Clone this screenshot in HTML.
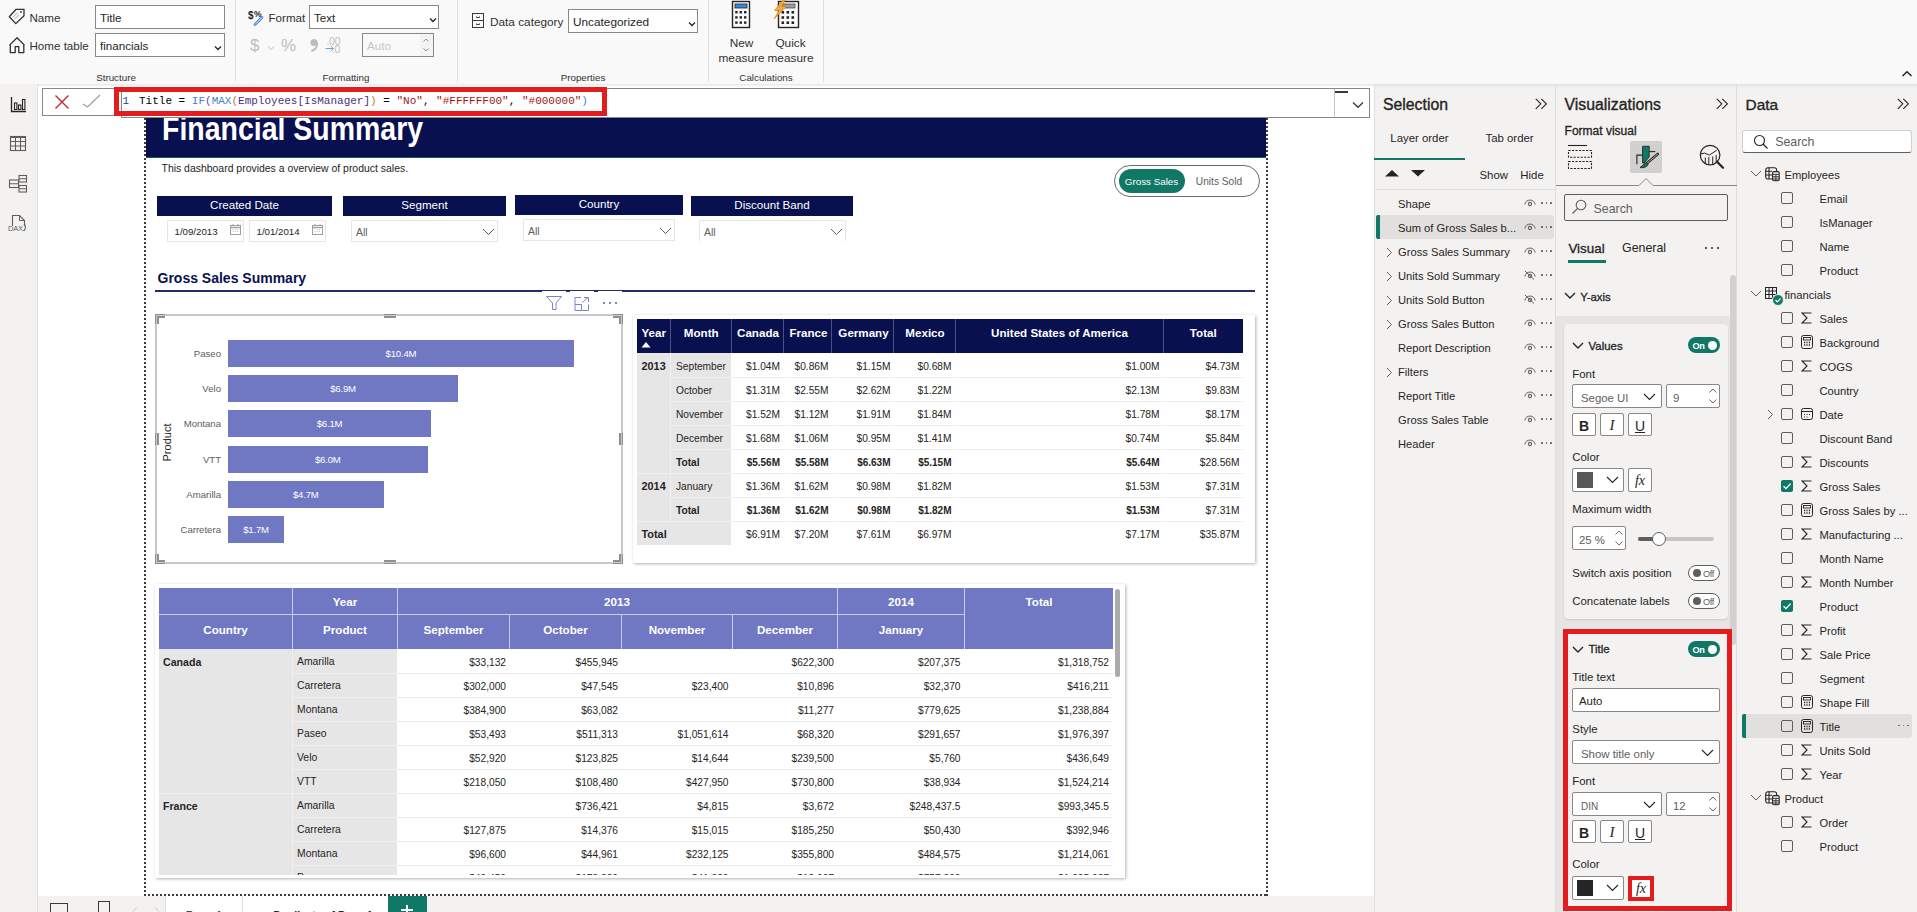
<!DOCTYPE html>
<html><head><meta charset="utf-8">
<style>
*{margin:0;padding:0;box-sizing:border-box}
html,body{width:1917px;height:912px;overflow:hidden;background:#fff;font-family:"Liberation Sans",sans-serif;color:#252423;position:relative}
.a{position:absolute}
.t{position:absolute;white-space:nowrap;line-height:1}
</style></head><body>
<div class="a" style="left:0px;top:0px;width:1917px;height:84px;background:#f9f9f9;"></div>
<div class="a" style="left:0px;top:84px;width:1917px;height:828px;background:#fff;"></div>
<div class="a" style="left:235px;top:0px;width:1px;height:82px;background:#e1dfdd;"></div>
<div class="a" style="left:457px;top:0px;width:1px;height:82px;background:#e1dfdd;"></div>
<div class="a" style="left:708px;top:0px;width:1px;height:82px;background:#e1dfdd;"></div>
<div class="a" style="left:823px;top:0px;width:1px;height:82px;background:#e1dfdd;"></div>
<svg class="a" style="left:8px;top:8px;" width="18" height="18" viewBox="0 0 18 18" fill="none"><path d="M1.3 8.8 L8.1 1.3 H16 V7.8 L7.8 15.6 Z" stroke="#323130" stroke-width="1.3" stroke-linejoin="round"/><circle cx="13" cy="3.9" r="0.9" fill="#323130"/><path d="M4.8 9.3 L9.8 4.6 M6.6 11 L11.2 6.6" stroke="#9a9896" stroke-width="0.8"/></svg>
<div class="t" style="top:12.14px;font-size:11.6px;color:#323130;left:29.5px;">Name</div>
<div class="a" style="left:95px;top:5px;width:130px;height:24px;background:#fff;border:1px solid #8a8886;"></div>
<div class="t" style="top:12.14px;font-size:11.6px;color:#252423;left:100px;">Title</div>
<svg class="a" style="left:8px;top:36px;" width="18" height="18" viewBox="0 0 18 18" fill="none"><path d="M1.4 9.4 L9 1.7 L16.6 9.4 M2.3 8.6 V16.6 H7.2 V10.6 H10.8 V16.6 H15.8 V8.6" stroke="#323130" stroke-width="1.3" stroke-linejoin="round"/></svg>
<div class="t" style="top:40.14px;font-size:11.6px;color:#323130;left:29.5px;">Home table</div>
<div class="a" style="left:95px;top:33px;width:130px;height:24px;background:#fff;border:1px solid #8a8886;"></div>
<div class="t" style="top:40.14px;font-size:11.6px;color:#252423;left:100px;">financials</div>
<svg class="a" style="left:214px;top:45px;" width="8" height="6" viewBox="0 0 8 6" fill="none"><path d="M1 1.5 L4 4.5 L7 1.5" stroke="#252423" stroke-width="1.3"/></svg>
<div class="t" style="top:72.67px;font-size:9.8px;color:#323130;left:-284px;width:800px;text-align:center;">Structure</div>
<div class="t" style="top:10.50px;font-size:10px;color:#252423;font-weight:700;left:248px;">$</div>
<div class="t" style="top:10.28px;font-size:8.5px;color:#252423;font-weight:700;left:254px;">%</div>
<svg class="a" style="left:253px;top:14px;" width="12" height="12" viewBox="0 0 12 12" fill="none"><path d="M2 10.5 L9 3.5" stroke="#2f7cd6" stroke-width="2.6" stroke-linecap="round"/><path d="M2 10.5 L9 3.5" stroke="#fff" stroke-width="1" stroke-linecap="round"/></svg>
<div class="t" style="top:12.14px;font-size:11.6px;color:#323130;left:268.5px;">Format</div>
<div class="a" style="left:309px;top:5px;width:130px;height:24px;background:#fff;border:1px solid #8a8886;"></div>
<div class="t" style="top:12.14px;font-size:11.6px;color:#252423;left:314px;">Text</div>
<svg class="a" style="left:429px;top:17px;" width="8" height="6" viewBox="0 0 8 6" fill="none"><path d="M1 1.5 L4 4.5 L7 1.5" stroke="#252423" stroke-width="1.3"/></svg>
<div class="t" style="top:36.55px;font-size:17px;color:#bdbdbd;left:250px;">$</div>
<svg class="a" style="left:267px;top:45px;" width="8" height="6" viewBox="0 0 8 6" fill="none"><path d="M1 1.5 L4 4.5 L7 1.5" stroke="#bdbdbd" stroke-width="1"/></svg>
<div class="t" style="top:37.05px;font-size:17px;color:#bdbdbd;left:281px;">%</div>
<svg class="a" style="left:309px;top:38px;" width="10" height="14" viewBox="0 0 10 14" fill="none"><circle cx="5" cy="4.5" r="3.6" fill="#bdbdbd"/><path d="M8.2 5 C8.2 9 6 12 2.5 13" stroke="#bdbdbd" stroke-width="2"/></svg>
<div class="t" style="top:36.08px;font-size:10.5px;color:#bdbdbd;left:326.5px;letter-spacing:-0.3px;">.00</div>
<div class="t" style="top:43.58px;font-size:10.5px;color:#bdbdbd;left:332px;letter-spacing:-0.3px;">.0</div>
<svg class="a" style="left:325px;top:45px;" width="10" height="7" viewBox="0 0 10 7" fill="none"><path d="M0.5 3.5 H8.5 M5.8 1 L8.5 3.5 L5.8 6" stroke="#5fa8de" stroke-width="1"/></svg>
<div class="a" style="left:362px;top:33px;width:72px;height:24px;background:#f9f9f9;border:1px solid #8a8886;"></div>
<div class="t" style="top:40.14px;font-size:11.6px;color:#c8c6c4;left:367px;">Auto</div>
<div class="a" style="left:420px;top:34px;width:13px;height:22px;background:#f3f3f3;"></div>
<svg class="a" style="left:421px;top:36px;" width="10" height="18" viewBox="0 0 10 18" fill="none"><path d="M2.5 5.5 L5 3 L7.5 5.5 M2.5 12.5 L5 15 L7.5 12.5" stroke="#8a8886" stroke-width="0.9"/></svg>
<div class="t" style="top:72.67px;font-size:9.8px;color:#323130;left:-54px;width:800px;text-align:center;">Formatting</div>
<svg class="a" style="left:471px;top:12px;" width="15" height="17" viewBox="0 0 15 17" fill="none"><rect x="1.5" y="1.5" width="11" height="14" stroke="#3b3a39" stroke-width="1"/><path d="M1.5 8.5 H12.5 M5.5 4.5 V5.5 H8.5 V4.5 M5.5 11.5 V12.5 H8.5 V11.5" stroke="#3b3a39" stroke-width="1"/></svg>
<div class="t" style="top:16.97px;font-size:11.8px;color:#323130;left:490px;">Data category</div>
<div class="a" style="left:568px;top:9px;width:130px;height:24px;background:#fff;border:1px solid #8a8886;"></div>
<div class="t" style="top:16.97px;font-size:11.8px;color:#252423;left:573px;">Uncategorized</div>
<svg class="a" style="left:688px;top:21px;" width="8" height="6" viewBox="0 0 8 6" fill="none"><path d="M1 1.5 L4 4.5 L7 1.5" stroke="#252423" stroke-width="1.3"/></svg>
<div class="t" style="top:72.67px;font-size:9.8px;color:#323130;left:183px;width:800px;text-align:center;">Properties</div>
<svg class="a" style="left:731px;top:0px;" width="20" height="29" viewBox="0 0 20 29" fill="none"><rect x="1.5" y="1.5" width="17" height="26" stroke="#252423" stroke-width="1.4"/><rect x="4" y="4" width="12" height="4" fill="#3a86d8" stroke="#252423" stroke-width="0.8"/><rect x="4.2" y="11.0" width="2.4" height="2.4" fill="#252423"/><rect x="8.6" y="11.0" width="2.4" height="2.4" fill="#252423"/><rect x="13.0" y="11.0" width="2.4" height="2.4" fill="#252423"/><rect x="4.2" y="16.2" width="2.4" height="2.4" fill="#252423"/><rect x="8.6" y="16.2" width="2.4" height="2.4" fill="#252423"/><rect x="13.0" y="16.2" width="2.4" height="2.4" fill="#252423"/><rect x="4.2" y="21.4" width="2.4" height="2.4" fill="#252423"/><rect x="8.6" y="21.4" width="2.4" height="2.4" fill="#252423"/><rect x="13.0" y="21.4" width="2.4" height="2.4" fill="#252423"/></svg>
<svg class="a" style="left:773px;top:0px;" width="28" height="29" viewBox="0 0 28 29" fill="none"><rect x="5.5" y="1.5" width="20" height="26" stroke="#252423" stroke-width="1.4"/><rect x="9" y="4" width="13" height="4" fill="#a0a0a0" stroke="#252423" stroke-width="0.6"/><rect x="8.5" y="11.0" width="2.6" height="2.6" fill="#252423"/><rect x="13.5" y="11.0" width="2.6" height="2.6" fill="#252423"/><rect x="18.5" y="11.0" width="2.6" height="2.6" fill="#252423"/><rect x="8.5" y="16.2" width="2.6" height="2.6" fill="#252423"/><rect x="13.5" y="16.2" width="2.6" height="2.6" fill="#252423"/><rect x="18.5" y="16.2" width="2.6" height="2.6" fill="#252423"/><rect x="8.5" y="21.4" width="2.6" height="2.6" fill="#252423"/><rect x="13.5" y="21.4" width="2.6" height="2.6" fill="#252423"/><rect x="18.5" y="21.4" width="2.6" height="2.6" fill="#252423"/><path d="M10 0 L1.5 10.5 H6 L1 19 L13.5 6.5 H8.5 L12.5 0 Z" fill="#f2a93b" stroke="#c77d12" stroke-width="0.6"/></svg>
<div class="t" style="top:37.97px;font-size:11.8px;color:#323130;left:341.5px;width:800px;text-align:center;">New</div>
<div class="t" style="top:52.97px;font-size:11.8px;color:#323130;left:341.5px;width:800px;text-align:center;">measure</div>
<div class="t" style="top:37.97px;font-size:11.8px;color:#323130;left:390.5px;width:800px;text-align:center;">Quick</div>
<div class="t" style="top:52.97px;font-size:11.8px;color:#323130;left:390.5px;width:800px;text-align:center;">measure</div>
<div class="t" style="top:72.67px;font-size:9.8px;color:#323130;left:366px;width:800px;text-align:center;">Calculations</div>
<svg class="a" style="left:1901px;top:70px;" width="12" height="8" viewBox="0 0 12 8" fill="none"><path d="M1.5 6 L6 1.8 L10.5 6" stroke="#252423" stroke-width="1.5"/></svg>
<div class="a" style="left:0px;top:84px;width:1374px;height:3px;background:linear-gradient(#e6e6e6,#fff);"></div>
<div class="a" style="left:0px;top:84px;width:38px;height:828px;background:#f3f2f1;border-right:1px solid #e1dfdd;"></div>
<svg class="a" style="left:10px;top:96px;" width="17" height="17" viewBox="0 0 17 17" fill="none"><path d="M1.5 1 V15.5 H16" stroke="#252423" stroke-width="1.3"/><rect x="4.5" y="7" width="2.4" height="6.5" stroke="#252423" stroke-width="1.1"/><rect x="8.5" y="9" width="2.4" height="4.5" stroke="#252423" stroke-width="1.1"/><rect x="12.5" y="3.5" width="2.4" height="10" stroke="#252423" stroke-width="1.1"/></svg>
<svg class="a" style="left:9px;top:135px;" width="18" height="17" viewBox="0 0 18 17" fill="none"><rect x="1.5" y="1.5" width="15" height="14" stroke="#605e5c" stroke-width="1.1"/><path d="M1.5 2 H16.5" stroke="#605e5c" stroke-width="2"/><path d="M1.5 6.5 H16.5 M1.5 11 H16.5 M6.5 1.5 V15.5 M11.5 1.5 V15.5" stroke="#605e5c" stroke-width="1.1"/></svg>
<svg class="a" style="left:8px;top:174px;" width="20" height="20" viewBox="0 0 20 20" fill="none"><rect x="1.5" y="6" width="9" height="7.5" stroke="#605e5c" stroke-width="1.1"/><rect x="11" y="1.5" width="7.5" height="6.5" stroke="#605e5c" stroke-width="1.1"/><rect x="11" y="11.5" width="7.5" height="6.5" stroke="#605e5c" stroke-width="1.1"/><path d="M1.5 9.8 H10.5 M11 4.8 H18.5 M11 14.8 H18.5" stroke="#605e5c" stroke-width="1.1"/></svg>
<svg class="a" style="left:8px;top:214px;" width="20" height="20" viewBox="0 0 20 20" fill="none"><path d="M4.5 12 V1.5 H11.5 L16.5 6.5 V12" stroke="#605e5c" stroke-width="1.1"/><path d="M11.5 1.5 V6.5 H16.5" stroke="#605e5c" stroke-width="1"/><path d="M16 10 C18 12 18 15 15.5 17" stroke="#605e5c" stroke-width="1.1"/></svg>
<div class="t" style="left:8px;top:225px;font-size:7.5px;color:#605e5c;letter-spacing:-0.2px">DAX</div>
<div class="a" style="left:42px;top:88px;width:1328px;height:28px;background:#fff;border:1px solid #8a8886;"></div>
<div class="a" style="left:121px;top:92px;width:1249px;height:26px;background:#fff;border:1px solid #8a8886;border-top:none;"></div>
<div class="a" style="left:1334px;top:89px;width:1px;height:28px;background:#c8c6c4;"></div>
<div class="a" style="left:1335px;top:91px;width:13px;height:2px;background:#3b3a39;"></div>
<svg class="a" style="left:1352px;top:101px;" width="12" height="8" viewBox="0 0 12 8" fill="none"><path d="M1 1.5 L6 6.3 L11 1.5" stroke="#3b3a39" stroke-width="1.3"/></svg>
<svg class="a" style="left:54px;top:94px;" width="16" height="16" viewBox="0 0 16 16" fill="none"><path d="M1.5 1.5 L14.5 14.5 M14.5 1.5 L1.5 14.5" stroke="#c4262e" stroke-width="1.4"/></svg>
<svg class="a" style="left:82px;top:94px;" width="20" height="14" viewBox="0 0 20 14" fill="none"><path d="M1 10 L5.5 13 L18 1" stroke="#a19f9d" stroke-width="1.2"/></svg>
<div class="a" style="left:114px;top:87px;width:493px;height:29px;border:5px solid #e31d1d;"></div>
<div class="t" style="top:95.72px;font-size:10.9px;color:#1f3f8f;font-family:'Liberation Mono',monospace;left:122.5px;">1</div>
<div class="t" style="top:95.64px;font-size:11px;color:#000;font-family:'Liberation Mono',monospace;left:139px;"><span style="color:#000">Title = </span><span style="color:#3f7fd6">IF</span><span style="color:#7a3fb0">(</span><span style="color:#3f7fd6">MAX</span><span style="color:#c07a1a">(</span><span style="color:#4b2d7f">Employees[IsManager]</span><span style="color:#c07a1a">)</span><span style="color:#000"> = </span><span style="color:#a31515">"No"</span><span style="color:#000">, </span><span style="color:#a31515">"#FFFFFF00"</span><span style="color:#000">, </span><span style="color:#a31515">"#000000"</span><span style="color:#3f7fd6">)</span></div>
<div class="a" style="left:144px;top:118px;width:2px;height:778px;background:repeating-linear-gradient(to bottom,#3b3b3b 0 2px,transparent 2px 4px);"></div>
<div class="a" style="left:1266px;top:118px;width:2px;height:778px;background:repeating-linear-gradient(to bottom,#3b3b3b 0 2px,transparent 2px 4px);"></div>
<div class="a" style="left:144px;top:894px;width:1124px;height:2px;background:repeating-linear-gradient(to right,#3b3b3b 0 2px,transparent 2px 4px);"></div>
<div class="a" style="left:146px;top:118px;width:1120px;height:40px;background:#09104f;border-bottom:1px solid #1d5a5a;"></div>
<div class="a" style="left:146px;top:118px;width:1120px;height:40px;overflow:hidden"><div class="t" style="left:16px;top:-5px;font-size:32.5px;font-weight:bold;color:#fff;transform:scaleX(0.876);transform-origin:left">Financial Summary</div></div>
<div class="t" style="top:164.42px;font-size:10.45px;color:#252423;left:161.5px;">This dashboard provides a overview of product sales.</div>
<div class="a" style="left:1114px;top:165px;width:146px;height:32px;background:#fff;border:1px solid #6b6b6b;border-radius:16px;"></div>
<div class="a" style="left:1119px;top:169px;width:66px;height:24px;background:#117865;border-radius:12px;"></div>
<div class="t" style="top:176.97px;font-size:9.8px;color:#fff;left:751.5px;width:800px;text-align:center;">Gross Sales</div>
<div class="t" style="top:176.63px;font-size:10.2px;color:#605e5c;left:819px;width:800px;text-align:center;">Units Sold</div>
<div class="a" style="left:157px;top:196px;width:175px;height:20px;background:#09104f;"></div>
<div class="t" style="top:199.34px;font-size:11.6px;color:#fff;left:-155.5px;width:800px;text-align:center;">Created Date</div>
<div class="a" style="left:343px;top:196px;width:163px;height:20px;background:#09104f;"></div>
<div class="t" style="top:199.34px;font-size:11.6px;color:#fff;left:24.5px;width:800px;text-align:center;">Segment</div>
<div class="a" style="left:515px;top:195px;width:168px;height:20px;background:#09104f;"></div>
<div class="t" style="top:198.34px;font-size:11.6px;color:#fff;left:199.0px;width:800px;text-align:center;">Country</div>
<div class="a" style="left:691px;top:196px;width:162px;height:20px;background:#09104f;"></div>
<div class="t" style="top:199.34px;font-size:11.6px;color:#fff;left:372.0px;width:800px;text-align:center;">Discount Band</div>
<div class="a" style="left:167px;top:220px;width:77px;height:22px;background:#fff;border:1px solid #e6e6e6;"></div>
<div class="t" style="top:227.25px;font-size:9.7px;color:#252423;left:174.5px;">1/09/2013</div>
<svg class="a" style="left:230px;top:224px;" width="12" height="12" viewBox="0 0 12 12" fill="none"><rect x="0.5" y="1.5" width="10" height="9" stroke="#a19f9d" stroke-width="1"/><path d="M0.5 3.5 H10.5" stroke="#a19f9d" stroke-width="1.4"/><path d="M2.5 5.5 h1 M4.8 5.5 h1 M7 5.5 h1 M2.5 7.5 h1 M4.8 7.5 h1 M7 7.5 h1" stroke="#c8c6c4" stroke-width="1"/><path d="M3 0 V2 M8 0 V2" stroke="#a19f9d" stroke-width="1"/></svg>
<div class="a" style="left:249px;top:220px;width:77px;height:22px;background:#fff;border:1px solid #e6e6e6;"></div>
<div class="t" style="top:227.25px;font-size:9.7px;color:#252423;left:256.5px;">1/01/2014</div>
<svg class="a" style="left:312px;top:224px;" width="12" height="12" viewBox="0 0 12 12" fill="none"><rect x="0.5" y="1.5" width="10" height="9" stroke="#a19f9d" stroke-width="1"/><path d="M0.5 3.5 H10.5" stroke="#a19f9d" stroke-width="1.4"/><path d="M2.5 5.5 h1 M4.8 5.5 h1 M7 5.5 h1 M2.5 7.5 h1 M4.8 7.5 h1 M7 7.5 h1" stroke="#c8c6c4" stroke-width="1"/><path d="M3 0 V2 M8 0 V2" stroke="#a19f9d" stroke-width="1"/></svg>
<div class="a" style="left:351px;top:220px;width:147px;height:22px;background:#fff;border:1px solid #e6e6e6;"></div>
<div class="t" style="top:227.07px;font-size:10.5px;color:#605e5c;left:356px;">All</div>
<svg class="a" style="left:482px;top:228px;" width="13" height="8" viewBox="0 0 13 8" fill="none"><path d="M1 1 L6.5 6.5 L12 1" stroke="#605e5c" stroke-width="1"/></svg>
<div class="a" style="left:523px;top:219px;width:152px;height:22px;background:#fff;border:1px solid #e6e6e6;"></div>
<div class="t" style="top:226.07px;font-size:10.5px;color:#605e5c;left:528px;">All</div>
<svg class="a" style="left:659px;top:227px;" width="13" height="8" viewBox="0 0 13 8" fill="none"><path d="M1 1 L6.5 6.5 L12 1" stroke="#605e5c" stroke-width="1"/></svg>
<div class="a" style="left:699px;top:220px;width:147px;height:21px;background:#fff;border:1px solid #e6e6e6;border-bottom:none;"></div>
<div class="t" style="top:227.07px;font-size:10.5px;color:#605e5c;left:704px;">All</div>
<svg class="a" style="left:830px;top:228px;" width="13" height="8" viewBox="0 0 13 8" fill="none"><path d="M1 1 L6.5 6.5 L12 1" stroke="#605e5c" stroke-width="1"/></svg>
<div class="t" style="top:270.80px;font-size:14.0px;color:#09104f;font-weight:700;left:157.5px;">Gross Sales Summary</div>
<div class="a" style="left:155px;top:290px;width:1100px;height:2px;background:#252b66;"></div>
<div class="a" style="left:542px;top:291px;width:24px;height:1px;background:#fff;"></div>
<div class="a" style="left:570px;top:291px;width:24px;height:1px;background:#fff;"></div>
<div class="a" style="left:598px;top:291px;width:24px;height:1px;background:#fff;"></div>
<svg class="a" style="left:545px;top:295px;" width="18" height="16" viewBox="0 0 18 16" fill="none"><path d="M1.5 1.5 H16.5 L11 8 V14.5 H7.5 V8 Z" stroke="#7c84c9" stroke-width="1" stroke-linejoin="miter"/></svg>
<svg class="a" style="left:574px;top:297px;" width="16" height="14" viewBox="0 0 16 14" fill="none"><path d="M7 0.5 H1 V13.5 H14.5 V7.5 M1 7.5 H7.5 V13.5" stroke="#7c84c9" stroke-width="1"/><path d="M8.5 5.5 L14 0.5 M10 0.5 H14.5 V5" stroke="#7c84c9" stroke-width="1"/></svg>
<div class="a" style="left:603px;top:302px;width:2px;height:2px;background:#7c84c9;"></div>
<div class="a" style="left:609px;top:302px;width:2px;height:2px;background:#7c84c9;"></div>
<div class="a" style="left:615px;top:302px;width:2px;height:2px;background:#7c84c9;"></div>
<div class="a" style="left:155px;top:314px;width:468px;height:250px;background:#fff;border:2px solid #c8c8c8;"></div>
<div class="a" style="left:155px;top:314px;width:10px;height:1px;background:#8f8f8f;"></div>
<div class="a" style="left:155px;top:314px;width:1px;height:10px;background:#8f8f8f;"></div>
<div class="a" style="left:157px;top:316px;width:8px;height:2px;background:#8f8f8f;"></div>
<div class="a" style="left:157px;top:316px;width:2px;height:8px;background:#8f8f8f;"></div>
<div class="a" style="left:613px;top:314px;width:10px;height:1px;background:#8f8f8f;"></div>
<div class="a" style="left:622px;top:314px;width:1px;height:10px;background:#8f8f8f;"></div>
<div class="a" style="left:613px;top:316px;width:8px;height:2px;background:#8f8f8f;"></div>
<div class="a" style="left:619px;top:316px;width:2px;height:8px;background:#8f8f8f;"></div>
<div class="a" style="left:155px;top:563px;width:10px;height:1px;background:#8f8f8f;"></div>
<div class="a" style="left:155px;top:554px;width:1px;height:10px;background:#8f8f8f;"></div>
<div class="a" style="left:157px;top:560px;width:8px;height:2px;background:#8f8f8f;"></div>
<div class="a" style="left:157px;top:554px;width:2px;height:8px;background:#8f8f8f;"></div>
<div class="a" style="left:613px;top:563px;width:10px;height:1px;background:#8f8f8f;"></div>
<div class="a" style="left:622px;top:554px;width:1px;height:10px;background:#8f8f8f;"></div>
<div class="a" style="left:613px;top:560px;width:8px;height:2px;background:#8f8f8f;"></div>
<div class="a" style="left:619px;top:554px;width:2px;height:8px;background:#8f8f8f;"></div>
<div class="a" style="left:384px;top:314px;width:12px;height:1px;background:#8f8f8f;"></div>
<div class="a" style="left:384px;top:316px;width:12px;height:2px;background:#8f8f8f;"></div>
<div class="a" style="left:384px;top:563px;width:12px;height:1px;background:#8f8f8f;"></div>
<div class="a" style="left:384px;top:560px;width:12px;height:2px;background:#8f8f8f;"></div>
<div class="a" style="left:155px;top:433px;width:1px;height:12px;background:#8f8f8f;"></div>
<div class="a" style="left:157px;top:433px;width:2px;height:12px;background:#8f8f8f;"></div>
<div class="a" style="left:622px;top:433px;width:1px;height:12px;background:#8f8f8f;"></div>
<div class="a" style="left:619px;top:433px;width:2px;height:12px;background:#8f8f8f;"></div>
<div class="a" style="left:228px;top:340px;width:346px;height:27px;background:#7078c4;"></div>
<div class="t" style="top:348.54px;font-size:9.6px;color:#605e5c;right:1696px;">Paseo</div>
<div class="t" style="top:348.54px;font-size:9.6px;color:#fff;left:1.0px;width:800px;text-align:center;letter-spacing:-0.2px;">$10.4M</div>
<div class="a" style="left:228px;top:375px;width:230px;height:27px;background:#7078c4;"></div>
<div class="t" style="top:383.54px;font-size:9.6px;color:#605e5c;right:1696px;">Velo</div>
<div class="t" style="top:383.54px;font-size:9.6px;color:#fff;left:-57.0px;width:800px;text-align:center;letter-spacing:-0.2px;">$6.9M</div>
<div class="a" style="left:228px;top:410px;width:203px;height:27px;background:#7078c4;"></div>
<div class="t" style="top:418.54px;font-size:9.6px;color:#605e5c;right:1696px;">Montana</div>
<div class="t" style="top:418.54px;font-size:9.6px;color:#fff;left:-70.5px;width:800px;text-align:center;letter-spacing:-0.2px;">$6.1M</div>
<div class="a" style="left:228px;top:446px;width:200px;height:27px;background:#7078c4;"></div>
<div class="t" style="top:454.54px;font-size:9.6px;color:#605e5c;right:1696px;">VTT</div>
<div class="t" style="top:454.54px;font-size:9.6px;color:#fff;left:-72.25px;width:800px;text-align:center;letter-spacing:-0.2px;">$6.0M</div>
<div class="a" style="left:228px;top:481px;width:156px;height:27px;background:#7078c4;"></div>
<div class="t" style="top:489.54px;font-size:9.6px;color:#605e5c;right:1696px;">Amarilla</div>
<div class="t" style="top:489.54px;font-size:9.6px;color:#fff;left:-94.25px;width:800px;text-align:center;letter-spacing:-0.2px;">$4.7M</div>
<div class="a" style="left:228px;top:516px;width:56px;height:27px;background:#7078c4;"></div>
<div class="t" style="top:524.54px;font-size:9.6px;color:#605e5c;right:1696px;">Carretera</div>
<div class="t" style="top:524.54px;font-size:9.6px;color:#fff;left:-144.0px;width:800px;text-align:center;letter-spacing:-0.2px;">$1.7M</div>
<div class="t" style="left:148px;top:437px;font-size:11px;color:#252423;transform:rotate(-90deg);transform-origin:center;width:38px;text-align:center">Product</div>
<div class="a" style="left:633px;top:315px;width:622px;height:248px;background:#fff;box-shadow:1px 1px 3px rgba(0,0,0,.3);"></div>
<div class="a" style="left:637px;top:319px;width:606px;height:34px;background:#09104f;"></div>
<div class="t" style="top:326.84px;font-size:11.6px;color:#fff;font-weight:700;left:641.5px;">Year</div>
<div class="a" style="left:670px;top:319px;width:1px;height:34px;background:#4c5280;"></div>
<div class="t" style="top:326.84px;font-size:11.6px;color:#fff;font-weight:700;left:301.25px;width:800px;text-align:center;">Month</div>
<div class="a" style="left:731px;top:319px;width:1px;height:34px;background:#4c5280;"></div>
<div class="t" style="top:326.84px;font-size:11.6px;color:#fff;font-weight:700;left:358.0px;width:800px;text-align:center;">Canada</div>
<div class="a" style="left:783px;top:319px;width:1px;height:34px;background:#4c5280;"></div>
<div class="t" style="top:326.84px;font-size:11.6px;color:#fff;font-weight:700;left:408.5px;width:800px;text-align:center;">France</div>
<div class="a" style="left:831px;top:319px;width:1px;height:34px;background:#4c5280;"></div>
<div class="t" style="top:326.84px;font-size:11.6px;color:#fff;font-weight:700;left:463.5px;width:800px;text-align:center;">Germany</div>
<div class="a" style="left:893px;top:319px;width:1px;height:34px;background:#4c5280;"></div>
<div class="t" style="top:326.84px;font-size:11.6px;color:#fff;font-weight:700;left:525.0px;width:800px;text-align:center;">Mexico</div>
<div class="a" style="left:955px;top:319px;width:1px;height:34px;background:#4c5280;"></div>
<div class="t" style="top:326.84px;font-size:11.6px;color:#fff;font-weight:700;left:659.5px;width:800px;text-align:center;">United States of America</div>
<div class="a" style="left:1163px;top:319px;width:1px;height:34px;background:#4c5280;"></div>
<div class="t" style="top:326.84px;font-size:11.6px;color:#fff;font-weight:700;left:803.25px;width:800px;text-align:center;">Total</div>
<svg class="a" style="left:641px;top:341px;" width="10" height="7" viewBox="0 0 10 7" fill="none"><path d="M0.5 6.5 L5 1 L9.5 6.5 Z" fill="#fff"/></svg>
<div class="a" style="left:637px;top:353px;width:94px;height:192px;background:#e6e6e6;"></div>
<div class="a" style="left:670px;top:353px;width:1px;height:168px;background:#f0f0f0;"></div>
<div class="t" style="top:361.13px;font-size:10.9px;color:#252423;font-weight:700;left:641.5px;">2013</div>
<div class="t" style="top:361.73px;font-size:10.2px;color:#252423;left:676px;">September</div>
<div class="t" style="top:361.73px;font-size:10.2px;color:#252423;right:1137px;">$1.04M</div>
<div class="t" style="top:361.73px;font-size:10.2px;color:#252423;right:1088.5px;">$0.86M</div>
<div class="t" style="top:361.73px;font-size:10.2px;color:#252423;right:1026.5px;">$1.15M</div>
<div class="t" style="top:361.73px;font-size:10.2px;color:#252423;right:965.5px;">$0.68M</div>
<div class="t" style="top:361.73px;font-size:10.2px;color:#252423;right:757.5px;">$1.00M</div>
<div class="t" style="top:361.73px;font-size:10.2px;color:#252423;right:677.5px;">$4.73M</div>
<div class="a" style="left:731px;top:377px;width:512px;height:1px;background:#ececec;"></div>
<div class="a" style="left:671px;top:377px;width:60px;height:1px;background:#f0f0f0;"></div>
<div class="t" style="top:385.73px;font-size:10.2px;color:#252423;left:676px;">October</div>
<div class="t" style="top:385.73px;font-size:10.2px;color:#252423;right:1137px;">$1.31M</div>
<div class="t" style="top:385.73px;font-size:10.2px;color:#252423;right:1088.5px;">$2.55M</div>
<div class="t" style="top:385.73px;font-size:10.2px;color:#252423;right:1026.5px;">$2.62M</div>
<div class="t" style="top:385.73px;font-size:10.2px;color:#252423;right:965.5px;">$1.22M</div>
<div class="t" style="top:385.73px;font-size:10.2px;color:#252423;right:757.5px;">$2.13M</div>
<div class="t" style="top:385.73px;font-size:10.2px;color:#252423;right:677.5px;">$9.83M</div>
<div class="a" style="left:731px;top:401px;width:512px;height:1px;background:#ececec;"></div>
<div class="a" style="left:671px;top:401px;width:60px;height:1px;background:#f0f0f0;"></div>
<div class="t" style="top:409.73px;font-size:10.2px;color:#252423;left:676px;">November</div>
<div class="t" style="top:409.73px;font-size:10.2px;color:#252423;right:1137px;">$1.52M</div>
<div class="t" style="top:409.73px;font-size:10.2px;color:#252423;right:1088.5px;">$1.12M</div>
<div class="t" style="top:409.73px;font-size:10.2px;color:#252423;right:1026.5px;">$1.91M</div>
<div class="t" style="top:409.73px;font-size:10.2px;color:#252423;right:965.5px;">$1.84M</div>
<div class="t" style="top:409.73px;font-size:10.2px;color:#252423;right:757.5px;">$1.78M</div>
<div class="t" style="top:409.73px;font-size:10.2px;color:#252423;right:677.5px;">$8.17M</div>
<div class="a" style="left:731px;top:425px;width:512px;height:1px;background:#ececec;"></div>
<div class="a" style="left:671px;top:425px;width:60px;height:1px;background:#f0f0f0;"></div>
<div class="t" style="top:433.73px;font-size:10.2px;color:#252423;left:676px;">December</div>
<div class="t" style="top:433.73px;font-size:10.2px;color:#252423;right:1137px;">$1.68M</div>
<div class="t" style="top:433.73px;font-size:10.2px;color:#252423;right:1088.5px;">$1.06M</div>
<div class="t" style="top:433.73px;font-size:10.2px;color:#252423;right:1026.5px;">$0.95M</div>
<div class="t" style="top:433.73px;font-size:10.2px;color:#252423;right:965.5px;">$1.41M</div>
<div class="t" style="top:433.73px;font-size:10.2px;color:#252423;right:757.5px;">$0.74M</div>
<div class="t" style="top:433.73px;font-size:10.2px;color:#252423;right:677.5px;">$5.84M</div>
<div class="a" style="left:731px;top:449px;width:512px;height:1px;background:#ececec;"></div>
<div class="a" style="left:671px;top:449px;width:60px;height:1px;background:#f0f0f0;"></div>
<div class="t" style="top:457.73px;font-size:10.2px;color:#252423;font-weight:700;left:676px;">Total</div>
<div class="t" style="top:457.90px;font-size:10.0px;color:#252423;font-weight:700;right:1137px;">$5.56M</div>
<div class="t" style="top:457.90px;font-size:10.0px;color:#252423;font-weight:700;right:1088.5px;">$5.58M</div>
<div class="t" style="top:457.90px;font-size:10.0px;color:#252423;font-weight:700;right:1026.5px;">$6.63M</div>
<div class="t" style="top:457.90px;font-size:10.0px;color:#252423;font-weight:700;right:965.5px;">$5.15M</div>
<div class="t" style="top:457.90px;font-size:10.0px;color:#252423;font-weight:700;right:757.5px;">$5.64M</div>
<div class="t" style="top:457.73px;font-size:10.2px;color:#252423;right:677.5px;">$28.56M</div>
<div class="a" style="left:731px;top:473px;width:512px;height:1px;background:#ececec;"></div>
<div class="a" style="left:637px;top:473px;width:94px;height:1px;background:#f0f0f0;"></div>
<div class="t" style="top:481.13px;font-size:10.9px;color:#252423;font-weight:700;left:641.5px;">2014</div>
<div class="t" style="top:481.73px;font-size:10.2px;color:#252423;left:676px;">January</div>
<div class="t" style="top:481.73px;font-size:10.2px;color:#252423;right:1137px;">$1.36M</div>
<div class="t" style="top:481.73px;font-size:10.2px;color:#252423;right:1088.5px;">$1.62M</div>
<div class="t" style="top:481.73px;font-size:10.2px;color:#252423;right:1026.5px;">$0.98M</div>
<div class="t" style="top:481.73px;font-size:10.2px;color:#252423;right:965.5px;">$1.82M</div>
<div class="t" style="top:481.73px;font-size:10.2px;color:#252423;right:757.5px;">$1.53M</div>
<div class="t" style="top:481.73px;font-size:10.2px;color:#252423;right:677.5px;">$7.31M</div>
<div class="a" style="left:731px;top:497px;width:512px;height:1px;background:#ececec;"></div>
<div class="a" style="left:671px;top:497px;width:60px;height:1px;background:#f0f0f0;"></div>
<div class="t" style="top:505.73px;font-size:10.2px;color:#252423;font-weight:700;left:676px;">Total</div>
<div class="t" style="top:505.90px;font-size:10.0px;color:#252423;font-weight:700;right:1137px;">$1.36M</div>
<div class="t" style="top:505.90px;font-size:10.0px;color:#252423;font-weight:700;right:1088.5px;">$1.62M</div>
<div class="t" style="top:505.90px;font-size:10.0px;color:#252423;font-weight:700;right:1026.5px;">$0.98M</div>
<div class="t" style="top:505.90px;font-size:10.0px;color:#252423;font-weight:700;right:965.5px;">$1.82M</div>
<div class="t" style="top:505.90px;font-size:10.0px;color:#252423;font-weight:700;right:757.5px;">$1.53M</div>
<div class="t" style="top:505.73px;font-size:10.2px;color:#252423;right:677.5px;">$7.31M</div>
<div class="a" style="left:731px;top:521px;width:512px;height:1px;background:#ececec;"></div>
<div class="a" style="left:637px;top:521px;width:94px;height:1px;background:#f0f0f0;"></div>
<div class="t" style="top:529.13px;font-size:10.9px;color:#252423;font-weight:700;left:641.5px;">Total</div>
<div class="t" style="top:529.73px;font-size:10.2px;color:#252423;right:1137px;">$6.91M</div>
<div class="t" style="top:529.73px;font-size:10.2px;color:#252423;right:1088.5px;">$7.20M</div>
<div class="t" style="top:529.73px;font-size:10.2px;color:#252423;right:1026.5px;">$7.61M</div>
<div class="t" style="top:529.73px;font-size:10.2px;color:#252423;right:965.5px;">$6.97M</div>
<div class="t" style="top:529.73px;font-size:10.2px;color:#252423;right:757.5px;">$7.17M</div>
<div class="t" style="top:529.73px;font-size:10.2px;color:#252423;right:677.5px;">$35.87M</div>
<div class="a" style="left:784px;top:353px;width:1px;height:192px;background:linear-gradient(#fff,#fff);"></div>
<div class="a" style="left:832px;top:353px;width:1px;height:192px;background:linear-gradient(#fff,#fff);"></div>
<div class="a" style="left:894px;top:353px;width:1px;height:192px;background:linear-gradient(#fff,#fff);"></div>
<div class="a" style="left:955px;top:353px;width:1px;height:192px;background:linear-gradient(#fff,#fff);"></div>
<div class="a" style="left:1163px;top:353px;width:1px;height:192px;background:linear-gradient(#fff,#fff);"></div>
<div class="a" style="left:155px;top:584px;width:970px;height:294px;background:#fff;box-shadow:1px 1px 3px rgba(0,0,0,.3);"></div>
<div class="a" style="left:155px;top:584px;width:972px;height:291px;overflow:hidden">
<div class="a" style="left:4px;top:4px;width:954px;height:61px;background:#7078c4;"></div>
<div class="a" style="left:4px;top:30px;width:806px;height:1px;background:#c8cbe8;"></div>
<div class="a" style="left:137px;top:4px;width:1px;height:61px;background:#c8cbe8;"></div>
<div class="a" style="left:242px;top:4px;width:1px;height:61px;background:#c8cbe8;"></div>
<div class="a" style="left:682px;top:4px;width:1px;height:26px;background:#c8cbe8;"></div>
<div class="a" style="left:809px;top:4px;width:1px;height:61px;background:#c8cbe8;"></div>
<div class="a" style="left:354px;top:31px;width:1px;height:34px;background:#c8cbe8;"></div>
<div class="a" style="left:466px;top:31px;width:1px;height:34px;background:#c8cbe8;"></div>
<div class="a" style="left:577px;top:31px;width:1px;height:34px;background:#c8cbe8;"></div>
<div class="a" style="left:682px;top:31px;width:1px;height:34px;background:#c8cbe8;"></div>
<div class="t" style="top:12.14px;font-size:11.6px;color:#fff;font-weight:700;left:-210px;width:800px;text-align:center;">Year</div>
<div class="t" style="top:12.14px;font-size:11.6px;color:#fff;font-weight:700;left:62px;width:800px;text-align:center;">2013</div>
<div class="t" style="top:12.14px;font-size:11.6px;color:#fff;font-weight:700;left:346px;width:800px;text-align:center;">2014</div>
<div class="t" style="top:12.14px;font-size:11.6px;color:#fff;font-weight:700;left:484px;width:800px;text-align:center;">Total</div>
<div class="t" style="top:40.14px;font-size:11.6px;color:#fff;font-weight:700;left:-329.5px;width:800px;text-align:center;">Country</div>
<div class="t" style="top:40.14px;font-size:11.6px;color:#fff;font-weight:700;left:-210px;width:800px;text-align:center;">Product</div>
<div class="t" style="top:40.14px;font-size:11.6px;color:#fff;font-weight:700;left:-101.5px;width:800px;text-align:center;">September</div>
<div class="t" style="top:40.14px;font-size:11.6px;color:#fff;font-weight:700;left:10.5px;width:800px;text-align:center;">October</div>
<div class="t" style="top:40.14px;font-size:11.6px;color:#fff;font-weight:700;left:122px;width:800px;text-align:center;">November</div>
<div class="t" style="top:40.14px;font-size:11.6px;color:#fff;font-weight:700;left:230px;width:800px;text-align:center;">December</div>
<div class="t" style="top:40.14px;font-size:11.6px;color:#fff;font-weight:700;left:346px;width:800px;text-align:center;">January</div>
<div class="a" style="left:4px;top:65px;width:238px;height:230px;background:#e6e6e6;"></div>
<div class="a" style="left:137px;top:65px;width:1px;height:230px;background:#f0f0f0;"></div>
<div class="t" style="top:73.29px;font-size:10.6px;color:#252423;font-weight:700;left:8px;">Canada</div>
<div class="t" style="top:73.46px;font-size:10.4px;color:#252423;left:142px;">Amarilla</div>
<div class="t" style="top:73.63px;font-size:10.2px;color:#252423;right:621px;">$33,132</div>
<div class="t" style="top:73.63px;font-size:10.2px;color:#252423;right:509px;">$455,945</div>
<div class="t" style="top:73.63px;font-size:10.2px;color:#252423;right:293px;">$622,300</div>
<div class="t" style="top:73.63px;font-size:10.2px;color:#252423;right:166.5px;">$207,375</div>
<div class="t" style="top:73.63px;font-size:10.2px;color:#252423;right:18px;">$1,318,752</div>
<div class="a" style="left:242px;top:89px;width:716px;height:1px;background:#ececec;"></div>
<div class="a" style="left:138px;top:89px;width:104px;height:1px;background:#f0f0f0;"></div>
<div class="t" style="top:97.46px;font-size:10.4px;color:#252423;left:142px;">Carretera</div>
<div class="t" style="top:97.63px;font-size:10.2px;color:#252423;right:621px;">$302,000</div>
<div class="t" style="top:97.63px;font-size:10.2px;color:#252423;right:509px;">$47,545</div>
<div class="t" style="top:97.63px;font-size:10.2px;color:#252423;right:398.5px;">$23,400</div>
<div class="t" style="top:97.63px;font-size:10.2px;color:#252423;right:293px;">$10,896</div>
<div class="t" style="top:97.63px;font-size:10.2px;color:#252423;right:166.5px;">$32,370</div>
<div class="t" style="top:97.63px;font-size:10.2px;color:#252423;right:18px;">$416,211</div>
<div class="a" style="left:242px;top:113px;width:716px;height:1px;background:#ececec;"></div>
<div class="a" style="left:138px;top:113px;width:104px;height:1px;background:#f0f0f0;"></div>
<div class="t" style="top:121.46px;font-size:10.4px;color:#252423;left:142px;">Montana</div>
<div class="t" style="top:121.63px;font-size:10.2px;color:#252423;right:621px;">$384,900</div>
<div class="t" style="top:121.63px;font-size:10.2px;color:#252423;right:509px;">$63,082</div>
<div class="t" style="top:121.63px;font-size:10.2px;color:#252423;right:293px;">$11,277</div>
<div class="t" style="top:121.63px;font-size:10.2px;color:#252423;right:166.5px;">$779,625</div>
<div class="t" style="top:121.63px;font-size:10.2px;color:#252423;right:18px;">$1,238,884</div>
<div class="a" style="left:242px;top:137px;width:716px;height:1px;background:#ececec;"></div>
<div class="a" style="left:138px;top:137px;width:104px;height:1px;background:#f0f0f0;"></div>
<div class="t" style="top:145.46px;font-size:10.4px;color:#252423;left:142px;">Paseo</div>
<div class="t" style="top:145.63px;font-size:10.2px;color:#252423;right:621px;">$53,493</div>
<div class="t" style="top:145.63px;font-size:10.2px;color:#252423;right:509px;">$511,313</div>
<div class="t" style="top:145.63px;font-size:10.2px;color:#252423;right:398.5px;">$1,051,614</div>
<div class="t" style="top:145.63px;font-size:10.2px;color:#252423;right:293px;">$68,320</div>
<div class="t" style="top:145.63px;font-size:10.2px;color:#252423;right:166.5px;">$291,657</div>
<div class="t" style="top:145.63px;font-size:10.2px;color:#252423;right:18px;">$1,976,397</div>
<div class="a" style="left:242px;top:161px;width:716px;height:1px;background:#ececec;"></div>
<div class="a" style="left:138px;top:161px;width:104px;height:1px;background:#f0f0f0;"></div>
<div class="t" style="top:169.46px;font-size:10.4px;color:#252423;left:142px;">Velo</div>
<div class="t" style="top:169.63px;font-size:10.2px;color:#252423;right:621px;">$52,920</div>
<div class="t" style="top:169.63px;font-size:10.2px;color:#252423;right:509px;">$123,825</div>
<div class="t" style="top:169.63px;font-size:10.2px;color:#252423;right:398.5px;">$14,644</div>
<div class="t" style="top:169.63px;font-size:10.2px;color:#252423;right:293px;">$239,500</div>
<div class="t" style="top:169.63px;font-size:10.2px;color:#252423;right:166.5px;">$5,760</div>
<div class="t" style="top:169.63px;font-size:10.2px;color:#252423;right:18px;">$436,649</div>
<div class="a" style="left:242px;top:185px;width:716px;height:1px;background:#ececec;"></div>
<div class="a" style="left:138px;top:185px;width:104px;height:1px;background:#f0f0f0;"></div>
<div class="t" style="top:193.46px;font-size:10.4px;color:#252423;left:142px;">VTT</div>
<div class="t" style="top:193.63px;font-size:10.2px;color:#252423;right:621px;">$218,050</div>
<div class="t" style="top:193.63px;font-size:10.2px;color:#252423;right:509px;">$108,480</div>
<div class="t" style="top:193.63px;font-size:10.2px;color:#252423;right:398.5px;">$427,950</div>
<div class="t" style="top:193.63px;font-size:10.2px;color:#252423;right:293px;">$730,800</div>
<div class="t" style="top:193.63px;font-size:10.2px;color:#252423;right:166.5px;">$38,934</div>
<div class="t" style="top:193.63px;font-size:10.2px;color:#252423;right:18px;">$1,524,214</div>
<div class="a" style="left:242px;top:209px;width:716px;height:1px;background:#ececec;"></div>
<div class="a" style="left:4px;top:209px;width:238px;height:1px;background:#f0f0f0;"></div>
<div class="t" style="top:217.29px;font-size:10.6px;color:#252423;font-weight:700;left:8px;">France</div>
<div class="t" style="top:217.46px;font-size:10.4px;color:#252423;left:142px;">Amarilla</div>
<div class="t" style="top:217.63px;font-size:10.2px;color:#252423;right:509px;">$736,421</div>
<div class="t" style="top:217.63px;font-size:10.2px;color:#252423;right:398.5px;">$4,815</div>
<div class="t" style="top:217.63px;font-size:10.2px;color:#252423;right:293px;">$3,672</div>
<div class="t" style="top:217.63px;font-size:10.2px;color:#252423;right:166.5px;">$248,437.5</div>
<div class="t" style="top:217.63px;font-size:10.2px;color:#252423;right:18px;">$993,345.5</div>
<div class="a" style="left:242px;top:233px;width:716px;height:1px;background:#ececec;"></div>
<div class="a" style="left:138px;top:233px;width:104px;height:1px;background:#f0f0f0;"></div>
<div class="t" style="top:241.46px;font-size:10.4px;color:#252423;left:142px;">Carretera</div>
<div class="t" style="top:241.63px;font-size:10.2px;color:#252423;right:621px;">$127,875</div>
<div class="t" style="top:241.63px;font-size:10.2px;color:#252423;right:509px;">$14,376</div>
<div class="t" style="top:241.63px;font-size:10.2px;color:#252423;right:398.5px;">$15,015</div>
<div class="t" style="top:241.63px;font-size:10.2px;color:#252423;right:293px;">$185,250</div>
<div class="t" style="top:241.63px;font-size:10.2px;color:#252423;right:166.5px;">$50,430</div>
<div class="t" style="top:241.63px;font-size:10.2px;color:#252423;right:18px;">$392,946</div>
<div class="a" style="left:242px;top:257px;width:716px;height:1px;background:#ececec;"></div>
<div class="a" style="left:138px;top:257px;width:104px;height:1px;background:#f0f0f0;"></div>
<div class="t" style="top:265.46px;font-size:10.4px;color:#252423;left:142px;">Montana</div>
<div class="t" style="top:265.63px;font-size:10.2px;color:#252423;right:621px;">$96,600</div>
<div class="t" style="top:265.63px;font-size:10.2px;color:#252423;right:509px;">$44,961</div>
<div class="t" style="top:265.63px;font-size:10.2px;color:#252423;right:398.5px;">$232,125</div>
<div class="t" style="top:265.63px;font-size:10.2px;color:#252423;right:293px;">$355,800</div>
<div class="t" style="top:265.63px;font-size:10.2px;color:#252423;right:166.5px;">$484,575</div>
<div class="t" style="top:265.63px;font-size:10.2px;color:#252423;right:18px;">$1,214,061</div>
<div class="a" style="left:242px;top:281px;width:716px;height:1px;background:#ececec;"></div>
<div class="a" style="left:138px;top:281px;width:104px;height:1px;background:#f0f0f0;"></div>
<div class="t" style="top:289.46px;font-size:10.4px;color:#252423;left:142px;">Paseo</div>
<div class="t" style="top:289.63px;font-size:10.2px;color:#252423;right:621px;">$49,450</div>
<div class="t" style="top:289.63px;font-size:10.2px;color:#252423;right:509px;">$173,880</div>
<div class="t" style="top:289.63px;font-size:10.2px;color:#252423;right:398.5px;">$41,820</div>
<div class="t" style="top:289.63px;font-size:10.2px;color:#252423;right:293px;">$12,087</div>
<div class="t" style="top:289.63px;font-size:10.2px;color:#252423;right:166.5px;">$757,800</div>
<div class="t" style="top:289.63px;font-size:10.2px;color:#252423;right:18px;">$1,035,037</div>
</div>
<div class="a" style="left:1115px;top:589px;width:5px;height:88px;background:#ababab;border-radius:3px;"></div>
<div class="a" style="left:38px;top:896px;width:1336px;height:16px;background:#f3f2f1;"></div>
<div class="a" style="left:165px;top:896px;width:77px;height:16px;background:#fff;"></div>
<div class="a" style="left:242px;top:896px;width:1px;height:16px;background:#e1dfdd;"></div>
<div class="a" style="left:243px;top:896px;width:145px;height:16px;background:#fff;"></div>
<div class="a" style="left:165px;top:896px;width:1px;height:16px;background:#e1dfdd;"></div>
<div class="a" style="left:388px;top:896px;width:39px;height:16px;background:#117865;"></div>
<div class="a" style="left:406px;top:905px;width:2px;height:7px;background:#fff;"></div>
<div class="a" style="left:401px;top:909px;width:12px;height:2px;background:#fff;"></div>
<svg class="a" style="left:131px;top:907px;" width="8" height="5" viewBox="0 0 8 5" fill="none"><path d="M6 0.5 L2 4.5" stroke="#c8c6c4" stroke-width="1"/></svg>
<svg class="a" style="left:153px;top:907px;" width="8" height="5" viewBox="0 0 8 5" fill="none"><path d="M2 0.5 L6 4.5" stroke="#c8c6c4" stroke-width="1"/></svg>
<div class="a" style="left:50px;top:903px;width:18px;height:12px;border:1px solid #3b3a39;"></div>
<div class="a" style="left:98px;top:901px;width:12px;height:14px;border:1px solid #3b3a39;"></div>
<div class="t" style="top:909.14px;font-size:11.6px;color:#252423;left:-196px;width:800px;text-align:center;">Page 1</div>
<div class="t" style="top:909.14px;font-size:11.6px;color:#252423;font-weight:700;left:-77.5px;width:800px;text-align:center;transform:scaleX(0.93);transform-origin:center;">Duplicate of Page 1</div>
<div class="a" style="left:1374px;top:84px;width:543px;height:828px;background:#f3f2f1;"></div>
<div class="a" style="left:1374px;top:84px;width:1px;height:828px;background:#e1dfdd;"></div>
<div class="a" style="left:1555px;top:84px;width:1px;height:828px;background:#e1dfdd;"></div>
<div class="a" style="left:1736px;top:84px;width:1px;height:828px;background:#e1dfdd;"></div>
<div class="a" style="left:1374px;top:84px;width:543px;height:4px;background:linear-gradient(#e2e2e2,rgba(243,242,241,0));"></div>
<div class="t" style="top:96.67px;font-size:15.8px;color:#252423;left:1383px;-webkit-text-stroke:0.35px #252423;">Selection</div>
<svg class="a" style="left:1535px;top:97.5px;" width="12" height="12" viewBox="0 0 12 12" fill="none"><path d="M0.8 0.8 L5.8 5.8 L0.8 10.8 M6.3 0.8 L11.3 5.8 L6.3 10.8" stroke="#252423" stroke-width="1.1"/></svg>
<div class="t" style="top:133.21px;font-size:11.4px;color:#252423;left:1390.3px;">Layer order</div>
<div class="t" style="top:133.21px;font-size:11.4px;color:#252423;left:1485.5px;">Tab order</div>
<div class="a" style="left:1374px;top:158px;width:91px;height:2px;background:#117865;"></div>
<svg class="a" style="left:1385px;top:170px;" width="14" height="7" viewBox="0 0 14 7" fill="none"><path d="M0 6.5 L7 0 L14 6.5 Z" fill="#252423"/></svg>
<svg class="a" style="left:1411px;top:170px;" width="14" height="7" viewBox="0 0 14 7" fill="none"><path d="M0 0 L7 6.5 L14 0 Z" fill="#252423"/></svg>
<div class="t" style="top:169.51px;font-size:11.4px;color:#252423;left:1479.5px;">Show</div>
<div class="t" style="top:169.51px;font-size:11.4px;color:#252423;left:1520.3px;">Hide</div>
<div class="a" style="left:1374px;top:189px;width:181px;height:1px;background:#e1dfdd;"></div>
<div class="t" style="top:199.08px;font-size:11.2px;color:#252423;left:1398px;">Shape</div>
<svg class="a" style="left:1524px;top:197.8px;" width="12" height="10" viewBox="0 0 12 10" fill="none"><path d="M0.8 6.5 C1.6 0.6 10.4 0.6 11.2 6.5" stroke="#605e5c" stroke-width="1"/><circle cx="6" cy="6" r="1.6" stroke="#605e5c" stroke-width="1.1"/></svg>
<div class="a" style="left:1541.0px;top:202.3px;width:1.7px;height:1.7px;background:#605e5c;border-radius:50%;"></div>
<div class="a" style="left:1545.6px;top:202.3px;width:1.7px;height:1.7px;background:#605e5c;border-radius:50%;"></div>
<div class="a" style="left:1550.2px;top:202.3px;width:1.7px;height:1.7px;background:#605e5c;border-radius:50%;"></div>
<div class="a" style="left:1376px;top:215px;width:178px;height:24px;background:#e1e0df;border-radius:3px;"></div>
<div class="a" style="left:1376px;top:215px;width:4px;height:24px;background:#117865;border-radius:2px 0 0 2px;"></div>
<div class="t" style="top:223.08px;font-size:11.2px;color:#252423;left:1398px;">Sum of Gross Sales b...</div>
<svg class="a" style="left:1524px;top:221.8px;" width="12" height="10" viewBox="0 0 12 10" fill="none"><path d="M0.8 6.5 C1.6 0.6 10.4 0.6 11.2 6.5" stroke="#605e5c" stroke-width="1"/><circle cx="6" cy="6" r="1.6" stroke="#605e5c" stroke-width="1.1"/></svg>
<div class="a" style="left:1541.0px;top:226.3px;width:1.7px;height:1.7px;background:#605e5c;border-radius:50%;"></div>
<div class="a" style="left:1545.6px;top:226.3px;width:1.7px;height:1.7px;background:#605e5c;border-radius:50%;"></div>
<div class="a" style="left:1550.2px;top:226.3px;width:1.7px;height:1.7px;background:#605e5c;border-radius:50%;"></div>
<svg class="a" style="left:1386px;top:246.8px;" width="7" height="11" viewBox="0 0 7 11" fill="none"><path d="M1 1 L5.5 5.5 L1 10" stroke="#605e5c" stroke-width="1"/></svg>
<div class="t" style="top:247.08px;font-size:11.2px;color:#252423;left:1398px;">Gross Sales Summary</div>
<svg class="a" style="left:1524px;top:245.8px;" width="12" height="10" viewBox="0 0 12 10" fill="none"><path d="M0.8 6.5 C1.6 0.6 10.4 0.6 11.2 6.5" stroke="#605e5c" stroke-width="1"/><circle cx="6" cy="6" r="1.6" stroke="#605e5c" stroke-width="1.1"/></svg>
<div class="a" style="left:1541.0px;top:250.3px;width:1.7px;height:1.7px;background:#605e5c;border-radius:50%;"></div>
<div class="a" style="left:1545.6px;top:250.3px;width:1.7px;height:1.7px;background:#605e5c;border-radius:50%;"></div>
<div class="a" style="left:1550.2px;top:250.3px;width:1.7px;height:1.7px;background:#605e5c;border-radius:50%;"></div>
<svg class="a" style="left:1386px;top:270.8px;" width="7" height="11" viewBox="0 0 7 11" fill="none"><path d="M1 1 L5.5 5.5 L1 10" stroke="#605e5c" stroke-width="1"/></svg>
<div class="t" style="top:271.08px;font-size:11.2px;color:#252423;left:1398px;">Units Sold Summary</div>
<svg class="a" style="left:1524px;top:269.8px;" width="12" height="10" viewBox="0 0 12 10" fill="none"><path d="M0.8 6.5 C1.6 0.6 10.4 0.6 11.2 6.5" stroke="#605e5c" stroke-width="1"/><circle cx="6" cy="6" r="1.6" stroke="#605e5c" stroke-width="1.1"/><path d="M0.8 0.8 L10 9.5" stroke="#605e5c" stroke-width="1"/></svg>
<div class="a" style="left:1541.0px;top:274.3px;width:1.7px;height:1.7px;background:#605e5c;border-radius:50%;"></div>
<div class="a" style="left:1545.6px;top:274.3px;width:1.7px;height:1.7px;background:#605e5c;border-radius:50%;"></div>
<div class="a" style="left:1550.2px;top:274.3px;width:1.7px;height:1.7px;background:#605e5c;border-radius:50%;"></div>
<svg class="a" style="left:1386px;top:294.8px;" width="7" height="11" viewBox="0 0 7 11" fill="none"><path d="M1 1 L5.5 5.5 L1 10" stroke="#605e5c" stroke-width="1"/></svg>
<div class="t" style="top:295.08px;font-size:11.2px;color:#252423;left:1398px;">Units Sold Button</div>
<svg class="a" style="left:1524px;top:293.8px;" width="12" height="10" viewBox="0 0 12 10" fill="none"><path d="M0.8 6.5 C1.6 0.6 10.4 0.6 11.2 6.5" stroke="#605e5c" stroke-width="1"/><circle cx="6" cy="6" r="1.6" stroke="#605e5c" stroke-width="1.1"/><path d="M0.8 0.8 L10 9.5" stroke="#605e5c" stroke-width="1"/></svg>
<div class="a" style="left:1541.0px;top:298.3px;width:1.7px;height:1.7px;background:#605e5c;border-radius:50%;"></div>
<div class="a" style="left:1545.6px;top:298.3px;width:1.7px;height:1.7px;background:#605e5c;border-radius:50%;"></div>
<div class="a" style="left:1550.2px;top:298.3px;width:1.7px;height:1.7px;background:#605e5c;border-radius:50%;"></div>
<svg class="a" style="left:1386px;top:318.8px;" width="7" height="11" viewBox="0 0 7 11" fill="none"><path d="M1 1 L5.5 5.5 L1 10" stroke="#605e5c" stroke-width="1"/></svg>
<div class="t" style="top:319.08px;font-size:11.2px;color:#252423;left:1398px;">Gross Sales Button</div>
<svg class="a" style="left:1524px;top:317.8px;" width="12" height="10" viewBox="0 0 12 10" fill="none"><path d="M0.8 6.5 C1.6 0.6 10.4 0.6 11.2 6.5" stroke="#605e5c" stroke-width="1"/><circle cx="6" cy="6" r="1.6" stroke="#605e5c" stroke-width="1.1"/></svg>
<div class="a" style="left:1541.0px;top:322.3px;width:1.7px;height:1.7px;background:#605e5c;border-radius:50%;"></div>
<div class="a" style="left:1545.6px;top:322.3px;width:1.7px;height:1.7px;background:#605e5c;border-radius:50%;"></div>
<div class="a" style="left:1550.2px;top:322.3px;width:1.7px;height:1.7px;background:#605e5c;border-radius:50%;"></div>
<div class="t" style="top:343.08px;font-size:11.2px;color:#252423;left:1398px;">Report Description</div>
<svg class="a" style="left:1524px;top:341.8px;" width="12" height="10" viewBox="0 0 12 10" fill="none"><path d="M0.8 6.5 C1.6 0.6 10.4 0.6 11.2 6.5" stroke="#605e5c" stroke-width="1"/><circle cx="6" cy="6" r="1.6" stroke="#605e5c" stroke-width="1.1"/></svg>
<div class="a" style="left:1541.0px;top:346.3px;width:1.7px;height:1.7px;background:#605e5c;border-radius:50%;"></div>
<div class="a" style="left:1545.6px;top:346.3px;width:1.7px;height:1.7px;background:#605e5c;border-radius:50%;"></div>
<div class="a" style="left:1550.2px;top:346.3px;width:1.7px;height:1.7px;background:#605e5c;border-radius:50%;"></div>
<svg class="a" style="left:1386px;top:366.8px;" width="7" height="11" viewBox="0 0 7 11" fill="none"><path d="M1 1 L5.5 5.5 L1 10" stroke="#605e5c" stroke-width="1"/></svg>
<div class="t" style="top:367.08px;font-size:11.2px;color:#252423;left:1398px;">Filters</div>
<svg class="a" style="left:1524px;top:365.8px;" width="12" height="10" viewBox="0 0 12 10" fill="none"><path d="M0.8 6.5 C1.6 0.6 10.4 0.6 11.2 6.5" stroke="#605e5c" stroke-width="1"/><circle cx="6" cy="6" r="1.6" stroke="#605e5c" stroke-width="1.1"/></svg>
<div class="a" style="left:1541.0px;top:370.3px;width:1.7px;height:1.7px;background:#605e5c;border-radius:50%;"></div>
<div class="a" style="left:1545.6px;top:370.3px;width:1.7px;height:1.7px;background:#605e5c;border-radius:50%;"></div>
<div class="a" style="left:1550.2px;top:370.3px;width:1.7px;height:1.7px;background:#605e5c;border-radius:50%;"></div>
<div class="t" style="top:391.08px;font-size:11.2px;color:#252423;left:1398px;">Report Title</div>
<svg class="a" style="left:1524px;top:389.8px;" width="12" height="10" viewBox="0 0 12 10" fill="none"><path d="M0.8 6.5 C1.6 0.6 10.4 0.6 11.2 6.5" stroke="#605e5c" stroke-width="1"/><circle cx="6" cy="6" r="1.6" stroke="#605e5c" stroke-width="1.1"/></svg>
<div class="a" style="left:1541.0px;top:394.3px;width:1.7px;height:1.7px;background:#605e5c;border-radius:50%;"></div>
<div class="a" style="left:1545.6px;top:394.3px;width:1.7px;height:1.7px;background:#605e5c;border-radius:50%;"></div>
<div class="a" style="left:1550.2px;top:394.3px;width:1.7px;height:1.7px;background:#605e5c;border-radius:50%;"></div>
<div class="t" style="top:415.08px;font-size:11.2px;color:#252423;left:1398px;">Gross Sales Table</div>
<svg class="a" style="left:1524px;top:413.8px;" width="12" height="10" viewBox="0 0 12 10" fill="none"><path d="M0.8 6.5 C1.6 0.6 10.4 0.6 11.2 6.5" stroke="#605e5c" stroke-width="1"/><circle cx="6" cy="6" r="1.6" stroke="#605e5c" stroke-width="1.1"/></svg>
<div class="a" style="left:1541.0px;top:418.3px;width:1.7px;height:1.7px;background:#605e5c;border-radius:50%;"></div>
<div class="a" style="left:1545.6px;top:418.3px;width:1.7px;height:1.7px;background:#605e5c;border-radius:50%;"></div>
<div class="a" style="left:1550.2px;top:418.3px;width:1.7px;height:1.7px;background:#605e5c;border-radius:50%;"></div>
<div class="t" style="top:439.08px;font-size:11.2px;color:#252423;left:1398px;">Header</div>
<svg class="a" style="left:1524px;top:437.8px;" width="12" height="10" viewBox="0 0 12 10" fill="none"><path d="M0.8 6.5 C1.6 0.6 10.4 0.6 11.2 6.5" stroke="#605e5c" stroke-width="1"/><circle cx="6" cy="6" r="1.6" stroke="#605e5c" stroke-width="1.1"/></svg>
<div class="a" style="left:1541.0px;top:442.3px;width:1.7px;height:1.7px;background:#605e5c;border-radius:50%;"></div>
<div class="a" style="left:1545.6px;top:442.3px;width:1.7px;height:1.7px;background:#605e5c;border-radius:50%;"></div>
<div class="a" style="left:1550.2px;top:442.3px;width:1.7px;height:1.7px;background:#605e5c;border-radius:50%;"></div>
<div class="t" style="top:96.67px;font-size:15.8px;color:#252423;left:1564.6px;-webkit-text-stroke:0.35px #252423;">Visualizations</div>
<svg class="a" style="left:1716px;top:97.5px;" width="12" height="12" viewBox="0 0 12 12" fill="none"><path d="M0.8 0.8 L5.8 5.8 L0.8 10.8 M6.3 0.8 L11.3 5.8 L6.3 10.8" stroke="#252423" stroke-width="1.1"/></svg>
<div class="t" style="top:124.60px;font-size:12.0px;color:#252423;left:1564.6px;-webkit-text-stroke:0.3px #252423;">Format visual</div>
<svg class="a" style="left:1567px;top:144px;" width="26" height="26" viewBox="0 0 26 26" fill="none"><path d="M1 1.5 H20" stroke="#252423" stroke-width="1.1"/><rect x="1.5" y="6.5" width="23" height="6.8" stroke="#252423" stroke-width="1.1" stroke-dasharray="2.2 1.3"/><rect x="1.5" y="17.5" width="23" height="7" stroke="#252423" stroke-width="1.1" stroke-dasharray="2.2 1.3"/></svg>
<div class="a" style="left:1630px;top:141px;width:32px;height:32px;background:#d2d0ce;border-radius:2px;"></div>
<svg class="a" style="left:1635px;top:145px;" width="26" height="26" viewBox="0 0 26 26" fill="none"><path d="M1.9 19.3 V10.1 H7.6" stroke="#252423" stroke-width="1.1"/><path d="M7.6 1.3 H14.2 V12 L9 18 H7.6 Z" fill="#117865" stroke="#252423" stroke-width="0.9"/><path d="M14.2 6.6 H20.3" stroke="#252423" stroke-width="1.1"/><path d="M22.8 9 L11.5 18.6" stroke="#252423" stroke-width="2.6" stroke-linecap="round"/><path d="M22.8 9 L11.5 18.6" stroke="#d2d0ce" stroke-width="0.8"/><path d="M11.8 17.6 C9.5 17.8 8.5 20 5 22.6 C9 23.2 12.2 21.8 13.2 19.2 Z" fill="#117865" stroke="#252423" stroke-width="0.9"/></svg>
<svg class="a" style="left:1699px;top:144px;" width="26" height="26" viewBox="0 0 26 26" fill="none"><circle cx="11.1" cy="11.1" r="9.8" stroke="#252423" stroke-width="1.2"/><path d="M18.1 17.7 L24 23.8" stroke="#252423" stroke-width="2.2" stroke-linecap="round"/><path d="M1.3 10.2 L5.5 9.1 L10.3 11.1 L17.7 6.3" stroke="#252423" stroke-width="1"/><path d="M6.3 13.5 V19.5 M9.8 13 V20.5 M13.7 12.5 V20.5 M17.2 11 V18" stroke="#252423" stroke-width="1"/></svg>
<svg class="a" style="left:1556px;top:176px;" width="181" height="11" viewBox="0 0 181 11" fill="none"><path d="M0 9.5 H83 L90 2.5 L97 9.5 H181" stroke="#8a8886" stroke-width="1"/></svg>
<div class="a" style="left:1564px;top:194px;width:164px;height:27px;background:#f3f2f1;border:1px solid #605e5c;border-radius:2px;"></div>
<svg class="a" style="left:1571px;top:199px;" width="16" height="16" viewBox="0 0 16 16" fill="none"><circle cx="10" cy="6" r="4.8" stroke="#605e5c" stroke-width="1.1"/><path d="M6.6 9.4 L1.5 14.5" stroke="#605e5c" stroke-width="1.2"/></svg>
<div class="t" style="top:203.46px;font-size:12.4px;color:#605e5c;left:1593.5px;">Search</div>
<div class="t" style="top:241.61px;font-size:13.4px;color:#252423;left:1568.4px;-webkit-text-stroke:0.3px #252423;">Visual</div>
<div class="t" style="top:242.46px;font-size:12.4px;color:#252423;left:1622px;">General</div>
<div class="a" style="left:1705px;top:247px;width:2px;height:2px;background:#252423;border-radius:50%;"></div>
<div class="a" style="left:1711px;top:247px;width:2px;height:2px;background:#252423;border-radius:50%;"></div>
<div class="a" style="left:1717px;top:247px;width:2px;height:2px;background:#252423;border-radius:50%;"></div>
<div class="a" style="left:1568px;top:260px;width:38px;height:2.5px;background:#117865;"></div>
<div class="a" style="left:1556px;top:316px;width:174px;height:596px;background:#e6e5e3;"></div>
<div class="a" style="left:1556px;top:270px;width:174px;height:46px;background:#f3f2f1;"></div>
<div class="a" style="left:1730px;top:275px;width:6px;height:370px;background:#d2d1cf;border-radius:3px;"></div>
<svg class="a" style="left:1564px;top:292px;" width="12" height="7" viewBox="0 0 12 7" fill="none"><path d="M1 1 L6 6 L11 1" stroke="#252423" stroke-width="1.4"/></svg>
<div class="t" style="top:292.11px;font-size:11.4px;color:#252423;left:1580.2px;-webkit-text-stroke:0.3px #252423;">Y-axis</div>
<div class="a" style="left:1564px;top:324px;width:164px;height:295px;background:#f3f2f1;border-radius:4px;box-shadow:0 1px 2px rgba(0,0,0,.12);"></div>
<svg class="a" style="left:1572px;top:341.5px;" width="12" height="7" viewBox="0 0 12 7" fill="none"><path d="M1 1 L6 6 L11 1" stroke="#252423" stroke-width="1.4"/></svg>
<div class="t" style="top:340.51px;font-size:11.4px;color:#252423;left:1588.6px;-webkit-text-stroke:0.3px #252423;">Values</div>
<div class="a" style="left:1688px;top:337px;width:32px;height:16px;background:#117865;border-radius:8px;"></div>
<div class="t" style="top:341.98px;font-size:9.2px;color:#fff;font-weight:700;left:1692.5px;letter-spacing:-0.3px;">On</div>
<div class="a" style="left:1707.5px;top:340.5px;width:9px;height:9px;background:#fff;border-radius:50%;"></div>
<div class="t" style="top:368.51px;font-size:11.4px;color:#252423;left:1572.3px;">Font</div>
<div class="a" style="left:1572px;top:384px;width:90px;height:24px;background:#fff;border:1px solid #8a8886;border-radius:2px;"></div>
<div class="t" style="top:392.81px;font-size:11.4px;color:#605e5c;left:1581px;">Segoe UI</div>
<svg class="a" style="left:1643px;top:393px;" width="13" height="8" viewBox="0 0 13 8" fill="none"><path d="M1 1 L6.5 6.5 L12 1" stroke="#252423" stroke-width="1.1"/></svg>
<div class="a" style="left:1666px;top:384px;width:54px;height:24px;background:#fff;border:1px solid #8a8886;border-radius:2px;"></div>
<div class="t" style="top:392.81px;font-size:11.4px;color:#605e5c;left:1673px;">9</div>
<svg class="a" style="left:1708px;top:387px;" width="10" height="18" viewBox="0 0 10 18" fill="none"><path d="M1.5 5.5 L5 2 L8.5 5.5 M1.5 12.5 L5 16 L8.5 12.5" stroke="#605e5c" stroke-width="0.9"/></svg>
<div class="a" style="left:1572px;top:412.5px;width:24px;height:23px;background:#fff;border:1px solid #8a8886;border-radius:2px;"></div>
<div class="t" style="top:418.60px;font-size:14px;color:#252423;left:1184px;width:800px;text-align:center;font-weight:bold;">B</div>
<div class="a" style="left:1600px;top:412.5px;width:24px;height:23px;background:#fff;border:1px solid #8a8886;border-radius:2px;"></div>
<div class="t" style="top:417.75px;font-size:15px;color:#252423;left:1212px;width:800px;text-align:center;font-style:italic;font-family:'Liberation Serif';">I</div>
<div class="a" style="left:1628px;top:412.5px;width:24px;height:23px;background:#fff;border:1px solid #8a8886;border-radius:2px;"></div>
<div class="t" style="top:418.60px;font-size:14px;color:#252423;left:1240px;width:800px;text-align:center;text-decoration:underline;">U</div>
<div class="t" style="top:452.11px;font-size:11.4px;color:#252423;left:1572.3px;">Color</div>
<div class="a" style="left:1572px;top:468px;width:52px;height:24px;background:#fff;border:1px solid #8a8886;border-radius:2px;"></div>
<div class="a" style="left:1577px;top:472px;width:16px;height:16px;background:#595959;"></div>
<svg class="a" style="left:1606px;top:476px;" width="13" height="8" viewBox="0 0 13 8" fill="none"><path d="M1 1 L6.5 6.5 L12 1" stroke="#252423" stroke-width="1.1"/></svg>
<div class="a" style="left:1628px;top:468px;width:24px;height:24px;background:#fff;border:1px solid #8a8886;border-radius:2px;"></div>
<div class="t" style="top:474.10px;font-size:14px;color:#252423;left:1240px;width:800px;text-align:center;font-family:'Liberation Serif';font-style:italic;">fx</div>
<div class="t" style="top:504.21px;font-size:11.4px;color:#252423;left:1572.3px;">Maximum width</div>
<div class="a" style="left:1572px;top:526px;width:54px;height:24px;background:#fff;border:1px solid #8a8886;border-radius:2px;"></div>
<div class="t" style="top:534.81px;font-size:11.4px;color:#605e5c;left:1579px;">25 %</div>
<svg class="a" style="left:1614px;top:529px;" width="10" height="18" viewBox="0 0 10 18" fill="none"><path d="M1.5 5.5 L5 2 L8.5 5.5 M1.5 12.5 L5 16 L8.5 12.5" stroke="#605e5c" stroke-width="0.9"/></svg>
<div class="a" style="left:1638px;top:537px;width:76px;height:4px;background:#c8c6c4;border-radius:2px;"></div>
<div class="a" style="left:1638px;top:537px;width:21px;height:4px;background:#605e5c;border-radius:2px;"></div>
<div class="a" style="left:1652px;top:532px;width:14px;height:14px;background:#fff;border:1.5px solid #605e5c;border-radius:50%;"></div>
<div class="t" style="top:567.81px;font-size:11.4px;color:#252423;left:1572.3px;">Switch axis position</div>
<div class="a" style="left:1688px;top:565px;width:32px;height:16px;background:#fff;border:1px solid #605e5c;border-radius:8px;"></div>
<div class="a" style="left:1693px;top:569px;width:8px;height:8px;background:#605e5c;border-radius:50%;"></div>
<div class="t" style="top:569.98px;font-size:9.2px;color:#605e5c;left:1703px;letter-spacing:-0.4px;">Off</div>
<div class="t" style="top:595.91px;font-size:11.4px;color:#252423;left:1572.3px;">Concatenate labels</div>
<div class="a" style="left:1688px;top:593px;width:32px;height:16px;background:#fff;border:1px solid #605e5c;border-radius:8px;"></div>
<div class="a" style="left:1693px;top:597px;width:8px;height:8px;background:#605e5c;border-radius:50%;"></div>
<div class="t" style="top:597.98px;font-size:9.2px;color:#605e5c;left:1703px;letter-spacing:-0.4px;">Off</div>
<div class="a" style="left:1564px;top:631px;width:164px;height:281px;background:#f3f2f1;"></div>
<svg class="a" style="left:1572px;top:645.5px;" width="12" height="7" viewBox="0 0 12 7" fill="none"><path d="M1 1 L6 6 L11 1" stroke="#252423" stroke-width="1.4"/></svg>
<div class="t" style="top:644.11px;font-size:11.4px;color:#252423;left:1588.5px;-webkit-text-stroke:0.3px #252423;">Title</div>
<div class="a" style="left:1688px;top:641px;width:32px;height:16px;background:#117865;border-radius:8px;"></div>
<div class="t" style="top:645.98px;font-size:9.2px;color:#fff;font-weight:700;left:1692.5px;letter-spacing:-0.3px;">On</div>
<div class="a" style="left:1707.5px;top:644.5px;width:9px;height:9px;background:#fff;border-radius:50%;"></div>
<div class="t" style="top:671.81px;font-size:11.4px;color:#252423;left:1572.3px;">Title text</div>
<div class="a" style="left:1572px;top:688px;width:148px;height:24px;background:#fff;border:1px solid #8a8886;border-radius:2px;"></div>
<div class="t" style="top:696.31px;font-size:11.4px;color:#252423;left:1579px;">Auto</div>
<div class="t" style="top:723.61px;font-size:11.4px;color:#252423;left:1572.3px;">Style</div>
<div class="a" style="left:1572px;top:740px;width:148px;height:24px;background:#fff;border:1px solid #8a8886;border-radius:2px;"></div>
<div class="t" style="top:748.81px;font-size:11.4px;color:#605e5c;left:1581px;">Show title only</div>
<svg class="a" style="left:1701px;top:749px;" width="13" height="8" viewBox="0 0 13 8" fill="none"><path d="M1 1 L6.5 6.5 L12 1" stroke="#252423" stroke-width="1.1"/></svg>
<div class="t" style="top:776.11px;font-size:11.4px;color:#252423;left:1572.3px;">Font</div>
<div class="a" style="left:1572px;top:792px;width:90px;height:24px;background:#fff;border:1px solid #8a8886;border-radius:2px;"></div>
<div class="t" style="top:802.00px;font-size:10px;color:#605e5c;left:1581px;">DIN</div>
<svg class="a" style="left:1643px;top:801px;" width="13" height="8" viewBox="0 0 13 8" fill="none"><path d="M1 1 L6.5 6.5 L12 1" stroke="#252423" stroke-width="1.1"/></svg>
<div class="a" style="left:1666px;top:792px;width:54px;height:24px;background:#fff;border:1px solid #8a8886;border-radius:2px;"></div>
<div class="t" style="top:800.81px;font-size:11.4px;color:#605e5c;left:1673px;">12</div>
<svg class="a" style="left:1708px;top:795px;" width="10" height="18" viewBox="0 0 10 18" fill="none"><path d="M1.5 5.5 L5 2 L8.5 5.5 M1.5 12.5 L5 16 L8.5 12.5" stroke="#605e5c" stroke-width="0.9"/></svg>
<div class="a" style="left:1572px;top:820px;width:24px;height:23px;background:#fff;border:1px solid #8a8886;border-radius:2px;"></div>
<div class="t" style="top:826.10px;font-size:14px;color:#252423;left:1184px;width:800px;text-align:center;font-weight:bold;">B</div>
<div class="a" style="left:1600px;top:820px;width:24px;height:23px;background:#fff;border:1px solid #8a8886;border-radius:2px;"></div>
<div class="t" style="top:825.25px;font-size:15px;color:#252423;left:1212px;width:800px;text-align:center;font-style:italic;font-family:'Liberation Serif';">I</div>
<div class="a" style="left:1628px;top:820px;width:24px;height:23px;background:#fff;border:1px solid #8a8886;border-radius:2px;"></div>
<div class="t" style="top:826.10px;font-size:14px;color:#252423;left:1240px;width:800px;text-align:center;text-decoration:underline;">U</div>
<div class="t" style="top:859.41px;font-size:11.4px;color:#252423;left:1572.3px;">Color</div>
<div class="a" style="left:1572px;top:876px;width:52px;height:24px;background:#fff;border:1px solid #8a8886;border-radius:2px;"></div>
<div class="a" style="left:1577px;top:880px;width:16px;height:16px;background:#252525;"></div>
<svg class="a" style="left:1606px;top:884px;" width="13" height="8" viewBox="0 0 13 8" fill="none"><path d="M1 1 L6.5 6.5 L12 1" stroke="#252423" stroke-width="1.1"/></svg>
<div class="a" style="left:1628px;top:876px;width:26px;height:25px;background:#fff;border:4px solid #e31d1d;"></div>
<div class="t" style="top:882.10px;font-size:14px;color:#252423;left:1241px;width:800px;text-align:center;font-family:'Liberation Serif';font-style:italic;">fx</div>
<div class="a" style="left:1563px;top:629px;width:169px;height:282px;border:5px solid #e31d1d;"></div>
<div class="t" style="top:97.01px;font-size:15.4px;color:#252423;left:1745.6px;-webkit-text-stroke:0.35px #252423;">Data</div>
<svg class="a" style="left:1897px;top:97.5px;" width="12" height="12" viewBox="0 0 12 12" fill="none"><path d="M0.8 0.8 L5.8 5.8 L0.8 10.8 M6.3 0.8 L11.3 5.8 L6.3 10.8" stroke="#252423" stroke-width="1.1"/></svg>
<div class="a" style="left:1742px;top:130px;width:170px;height:23px;background:#fff;border:1px solid #d2d0ce;border-bottom:1px solid #605e5c;border-radius:3px;"></div>
<svg class="a" style="left:1753px;top:134px;" width="16" height="16" viewBox="0 0 16 16" fill="none"><circle cx="6.5" cy="6.5" r="5" stroke="#252423" stroke-width="1.1"/><path d="M10 10 L14.5 14.5" stroke="#252423" stroke-width="1.2"/></svg>
<div class="t" style="top:136.26px;font-size:12.4px;color:#605e5c;left:1775.2px;">Search</div>
<svg class="a" style="left:1750px;top:170px;" width="12" height="7" viewBox="0 0 12 7" fill="none"><path d="M1 1 L6 6 L11 1" stroke="#605e5c" stroke-width="1"/></svg>
<svg class="a" style="left:1765px;top:167px;" width="16" height="15" viewBox="0 0 16 15" fill="none"><path d="M7 12 H3 C1.6 12 0.7 11 0.7 9.6 V3 C0.7 1.6 1.6 0.7 3 0.7 H9.5 C10.8 0.7 11.6 1.5 11.6 2.8 V4" stroke="#252423" stroke-width="1.1"/><path d="M0.7 4.3 H7 M0.7 8 H7 M4 0.7 V12" stroke="#252423" stroke-width="1.1"/><rect x="7.6" y="4.6" width="6.6" height="9.2" rx="1.2" fill="#f3f2f1" stroke="#252423" stroke-width="1.1"/><path d="M7.6 7.3 H14.2 M7.6 9.8 H14.2 M7.6 12 H14.2 M10.9 7.3 V13.8" stroke="#252423" stroke-width="0.9"/></svg>
<div class="t" style="top:169.88px;font-size:11.2px;color:#252423;left:1784.5px;">Employees</div>
<div class="a" style="left:1781px;top:192px;width:12px;height:12px;border:1px solid #605e5c;border-radius:2px;"></div>
<div class="t" style="top:193.68px;font-size:11.2px;color:#252423;left:1819.5px;">Email</div>
<div class="a" style="left:1781px;top:216px;width:12px;height:12px;border:1px solid #605e5c;border-radius:2px;"></div>
<div class="t" style="top:217.68px;font-size:11.2px;color:#252423;left:1819.5px;">IsManager</div>
<div class="a" style="left:1781px;top:240px;width:12px;height:12px;border:1px solid #605e5c;border-radius:2px;"></div>
<div class="t" style="top:241.68px;font-size:11.2px;color:#252423;left:1819.5px;">Name</div>
<div class="a" style="left:1781px;top:264px;width:12px;height:12px;border:1px solid #605e5c;border-radius:2px;"></div>
<div class="t" style="top:265.68px;font-size:11.2px;color:#252423;left:1819.5px;">Product</div>
<svg class="a" style="left:1750px;top:290px;" width="12" height="7" viewBox="0 0 12 7" fill="none"><path d="M1 1 L6 6 L11 1" stroke="#605e5c" stroke-width="1"/></svg>
<svg class="a" style="left:1765px;top:287px;" width="14" height="13" viewBox="0 0 14 13" fill="none"><rect x="0.5" y="0.5" width="11" height="11" stroke="#252423" stroke-width="1"/><path d="M0.5 4 H11.5 M0.5 7.5 H11.5 M4 0.5 V11.5 M7.5 0.5 V11.5" stroke="#252423" stroke-width="1"/></svg>
<div class="a" style="left:1772px;top:294px;width:12px;height:12px;background:#117865;border-radius:50%;border:1px solid #f3f2f1;"></div>
<svg class="a" style="left:1772px;top:294px;" width="12" height="12" viewBox="0 0 12 12" fill="none"><path d="M3.5 6 L5.3 7.8 L8.5 4.5" stroke="#fff" stroke-width="1.2"/></svg>
<div class="t" style="top:289.88px;font-size:11.2px;color:#252423;left:1784.5px;">financials</div>
<div class="a" style="left:1781px;top:312px;width:12px;height:12px;border:1px solid #605e5c;border-radius:2px;"></div>
<svg class="a" style="left:1801px;top:312px;" width="12" height="12" viewBox="0 0 12 12" fill="none"><path d="M10.5 1 H1 L6 6 L1 11 H10.5" stroke="#252423" stroke-width="1.1"/></svg>
<div class="t" style="top:313.68px;font-size:11.2px;color:#252423;left:1819.5px;">Sales</div>
<div class="a" style="left:1781px;top:336px;width:12px;height:12px;border:1px solid #605e5c;border-radius:2px;"></div>
<svg class="a" style="left:1801px;top:335px;" width="12" height="14" viewBox="0 0 12 14" fill="none"><rect x="0.5" y="0.5" width="11" height="13" rx="2" stroke="#252423" stroke-width="1"/><rect x="2.5" y="2.5" width="7" height="2.5" stroke="#252423" stroke-width="0.9"/><path d="M3 7.5 h1.2 M5.4 7.5 h1.2 M7.8 7.5 h1.2 M3 10 h1.2 M5.4 10 h1.2 M7.8 10 h1.2" stroke="#252423" stroke-width="1.3"/></svg>
<div class="t" style="top:337.68px;font-size:11.2px;color:#252423;left:1819.5px;">Background</div>
<div class="a" style="left:1781px;top:360px;width:12px;height:12px;border:1px solid #605e5c;border-radius:2px;"></div>
<svg class="a" style="left:1801px;top:360px;" width="12" height="12" viewBox="0 0 12 12" fill="none"><path d="M10.5 1 H1 L6 6 L1 11 H10.5" stroke="#252423" stroke-width="1.1"/></svg>
<div class="t" style="top:361.68px;font-size:11.2px;color:#252423;left:1819.5px;">COGS</div>
<div class="a" style="left:1781px;top:384px;width:12px;height:12px;border:1px solid #605e5c;border-radius:2px;"></div>
<div class="t" style="top:385.68px;font-size:11.2px;color:#252423;left:1819.5px;">Country</div>
<svg class="a" style="left:1767px;top:409px;" width="8" height="11" viewBox="0 0 8 11" fill="none"><path d="M1 1 L5.5 5.5 L1 10" stroke="#605e5c" stroke-width="1"/></svg>
<div class="a" style="left:1781px;top:408px;width:12px;height:12px;border:1px solid #605e5c;border-radius:2px;"></div>
<svg class="a" style="left:1801px;top:408px;" width="12" height="12" viewBox="0 0 12 12" fill="none"><rect x="0.5" y="0.5" width="11" height="11" rx="2" stroke="#252423" stroke-width="1"/><path d="M0.5 3.5 H11.5" stroke="#252423" stroke-width="1"/><path d="M3 6.5 h1 M5.5 6.5 h1 M8 6.5 h1 M3 9 h1 M5.5 9 h1" stroke="#252423" stroke-width="1"/></svg>
<div class="t" style="top:409.68px;font-size:11.2px;color:#252423;left:1819.5px;">Date</div>
<div class="a" style="left:1781px;top:432px;width:12px;height:12px;border:1px solid #605e5c;border-radius:2px;"></div>
<div class="t" style="top:433.68px;font-size:11.2px;color:#252423;left:1819.5px;">Discount Band</div>
<div class="a" style="left:1781px;top:456px;width:12px;height:12px;border:1px solid #605e5c;border-radius:2px;"></div>
<svg class="a" style="left:1801px;top:456px;" width="12" height="12" viewBox="0 0 12 12" fill="none"><path d="M10.5 1 H1 L6 6 L1 11 H10.5" stroke="#252423" stroke-width="1.1"/></svg>
<div class="t" style="top:457.68px;font-size:11.2px;color:#252423;left:1819.5px;">Discounts</div>
<div class="a" style="left:1781px;top:480px;width:12px;height:12px;background:#117865;border-radius:2px;"></div>
<svg class="a" style="left:1781px;top:480px;" width="12" height="12" viewBox="0 0 12 12" fill="none"><path d="M2.5 6.2 L5 8.6 L9.6 3.6" stroke="#fff" stroke-width="1.4"/></svg>
<svg class="a" style="left:1801px;top:480px;" width="12" height="12" viewBox="0 0 12 12" fill="none"><path d="M10.5 1 H1 L6 6 L1 11 H10.5" stroke="#252423" stroke-width="1.1"/></svg>
<div class="t" style="top:481.68px;font-size:11.2px;color:#252423;left:1819.5px;">Gross Sales</div>
<div class="a" style="left:1781px;top:504px;width:12px;height:12px;border:1px solid #605e5c;border-radius:2px;"></div>
<svg class="a" style="left:1801px;top:503px;" width="12" height="14" viewBox="0 0 12 14" fill="none"><rect x="0.5" y="0.5" width="11" height="13" rx="2" stroke="#252423" stroke-width="1"/><rect x="2.5" y="2.5" width="7" height="2.5" stroke="#252423" stroke-width="0.9"/><path d="M3 7.5 h1.2 M5.4 7.5 h1.2 M7.8 7.5 h1.2 M3 10 h1.2 M5.4 10 h1.2 M7.8 10 h1.2" stroke="#252423" stroke-width="1.3"/></svg>
<div class="t" style="top:505.68px;font-size:11.2px;color:#252423;left:1819.5px;">Gross Sales by ...</div>
<div class="a" style="left:1781px;top:528px;width:12px;height:12px;border:1px solid #605e5c;border-radius:2px;"></div>
<svg class="a" style="left:1801px;top:528px;" width="12" height="12" viewBox="0 0 12 12" fill="none"><path d="M10.5 1 H1 L6 6 L1 11 H10.5" stroke="#252423" stroke-width="1.1"/></svg>
<div class="t" style="top:529.68px;font-size:11.2px;color:#252423;left:1819.5px;">Manufacturing ...</div>
<div class="a" style="left:1781px;top:552px;width:12px;height:12px;border:1px solid #605e5c;border-radius:2px;"></div>
<div class="t" style="top:553.68px;font-size:11.2px;color:#252423;left:1819.5px;">Month Name</div>
<div class="a" style="left:1781px;top:576px;width:12px;height:12px;border:1px solid #605e5c;border-radius:2px;"></div>
<svg class="a" style="left:1801px;top:576px;" width="12" height="12" viewBox="0 0 12 12" fill="none"><path d="M10.5 1 H1 L6 6 L1 11 H10.5" stroke="#252423" stroke-width="1.1"/></svg>
<div class="t" style="top:577.68px;font-size:11.2px;color:#252423;left:1819.5px;">Month Number</div>
<div class="a" style="left:1781px;top:600px;width:12px;height:12px;background:#117865;border-radius:2px;"></div>
<svg class="a" style="left:1781px;top:600px;" width="12" height="12" viewBox="0 0 12 12" fill="none"><path d="M2.5 6.2 L5 8.6 L9.6 3.6" stroke="#fff" stroke-width="1.4"/></svg>
<div class="t" style="top:601.68px;font-size:11.2px;color:#252423;left:1819.5px;">Product</div>
<div class="a" style="left:1781px;top:624px;width:12px;height:12px;border:1px solid #605e5c;border-radius:2px;"></div>
<svg class="a" style="left:1801px;top:624px;" width="12" height="12" viewBox="0 0 12 12" fill="none"><path d="M10.5 1 H1 L6 6 L1 11 H10.5" stroke="#252423" stroke-width="1.1"/></svg>
<div class="t" style="top:625.68px;font-size:11.2px;color:#252423;left:1819.5px;">Profit</div>
<div class="a" style="left:1781px;top:648px;width:12px;height:12px;border:1px solid #605e5c;border-radius:2px;"></div>
<svg class="a" style="left:1801px;top:648px;" width="12" height="12" viewBox="0 0 12 12" fill="none"><path d="M10.5 1 H1 L6 6 L1 11 H10.5" stroke="#252423" stroke-width="1.1"/></svg>
<div class="t" style="top:649.68px;font-size:11.2px;color:#252423;left:1819.5px;">Sale Price</div>
<div class="a" style="left:1781px;top:672px;width:12px;height:12px;border:1px solid #605e5c;border-radius:2px;"></div>
<div class="t" style="top:673.68px;font-size:11.2px;color:#252423;left:1819.5px;">Segment</div>
<div class="a" style="left:1781px;top:696px;width:12px;height:12px;border:1px solid #605e5c;border-radius:2px;"></div>
<svg class="a" style="left:1801px;top:695px;" width="12" height="14" viewBox="0 0 12 14" fill="none"><rect x="0.5" y="0.5" width="11" height="13" rx="2" stroke="#252423" stroke-width="1"/><rect x="2.5" y="2.5" width="7" height="2.5" stroke="#252423" stroke-width="0.9"/><path d="M3 7.5 h1.2 M5.4 7.5 h1.2 M7.8 7.5 h1.2 M3 10 h1.2 M5.4 10 h1.2 M7.8 10 h1.2" stroke="#252423" stroke-width="1.3"/></svg>
<div class="t" style="top:697.68px;font-size:11.2px;color:#252423;left:1819.5px;">Shape Fill</div>
<div class="a" style="left:1742px;top:714px;width:170px;height:24px;background:#e1e0df;border-radius:3px;"></div>
<div class="a" style="left:1742px;top:714px;width:4px;height:24px;background:#117865;border-radius:2px 0 0 2px;"></div>
<div class="a" style="left:1898.0px;top:724.5px;width:1.7px;height:1.7px;background:#605e5c;border-radius:50%;"></div>
<div class="a" style="left:1902.6px;top:724.5px;width:1.7px;height:1.7px;background:#605e5c;border-radius:50%;"></div>
<div class="a" style="left:1907.2px;top:724.5px;width:1.7px;height:1.7px;background:#605e5c;border-radius:50%;"></div>
<div class="a" style="left:1781px;top:720px;width:12px;height:12px;border:1px solid #605e5c;border-radius:2px;"></div>
<svg class="a" style="left:1801px;top:719px;" width="12" height="14" viewBox="0 0 12 14" fill="none"><rect x="0.5" y="0.5" width="11" height="13" rx="2" stroke="#252423" stroke-width="1"/><rect x="2.5" y="2.5" width="7" height="2.5" stroke="#252423" stroke-width="0.9"/><path d="M3 7.5 h1.2 M5.4 7.5 h1.2 M7.8 7.5 h1.2 M3 10 h1.2 M5.4 10 h1.2 M7.8 10 h1.2" stroke="#252423" stroke-width="1.3"/></svg>
<div class="t" style="top:721.68px;font-size:11.2px;color:#252423;left:1819.5px;">Title</div>
<div class="a" style="left:1781px;top:744px;width:12px;height:12px;border:1px solid #605e5c;border-radius:2px;"></div>
<svg class="a" style="left:1801px;top:744px;" width="12" height="12" viewBox="0 0 12 12" fill="none"><path d="M10.5 1 H1 L6 6 L1 11 H10.5" stroke="#252423" stroke-width="1.1"/></svg>
<div class="t" style="top:745.68px;font-size:11.2px;color:#252423;left:1819.5px;">Units Sold</div>
<div class="a" style="left:1781px;top:768px;width:12px;height:12px;border:1px solid #605e5c;border-radius:2px;"></div>
<svg class="a" style="left:1801px;top:768px;" width="12" height="12" viewBox="0 0 12 12" fill="none"><path d="M10.5 1 H1 L6 6 L1 11 H10.5" stroke="#252423" stroke-width="1.1"/></svg>
<div class="t" style="top:769.68px;font-size:11.2px;color:#252423;left:1819.5px;">Year</div>
<svg class="a" style="left:1750px;top:794px;" width="12" height="7" viewBox="0 0 12 7" fill="none"><path d="M1 1 L6 6 L11 1" stroke="#605e5c" stroke-width="1"/></svg>
<svg class="a" style="left:1765px;top:791px;" width="16" height="15" viewBox="0 0 16 15" fill="none"><path d="M7 12 H3 C1.6 12 0.7 11 0.7 9.6 V3 C0.7 1.6 1.6 0.7 3 0.7 H9.5 C10.8 0.7 11.6 1.5 11.6 2.8 V4" stroke="#252423" stroke-width="1.1"/><path d="M0.7 4.3 H7 M0.7 8 H7 M4 0.7 V12" stroke="#252423" stroke-width="1.1"/><rect x="7.6" y="4.6" width="6.6" height="9.2" rx="1.2" fill="#f3f2f1" stroke="#252423" stroke-width="1.1"/><path d="M7.6 7.3 H14.2 M7.6 9.8 H14.2 M7.6 12 H14.2 M10.9 7.3 V13.8" stroke="#252423" stroke-width="0.9"/></svg>
<div class="t" style="top:793.88px;font-size:11.2px;color:#252423;left:1784.5px;">Product</div>
<div class="a" style="left:1781px;top:816px;width:12px;height:12px;border:1px solid #605e5c;border-radius:2px;"></div>
<svg class="a" style="left:1801px;top:816px;" width="12" height="12" viewBox="0 0 12 12" fill="none"><path d="M10.5 1 H1 L6 6 L1 11 H10.5" stroke="#252423" stroke-width="1.1"/></svg>
<div class="t" style="top:817.68px;font-size:11.2px;color:#252423;left:1819.5px;">Order</div>
<div class="a" style="left:1781px;top:840px;width:12px;height:12px;border:1px solid #605e5c;border-radius:2px;"></div>
<div class="t" style="top:841.68px;font-size:11.2px;color:#252423;left:1819.5px;">Product</div></body></html>
